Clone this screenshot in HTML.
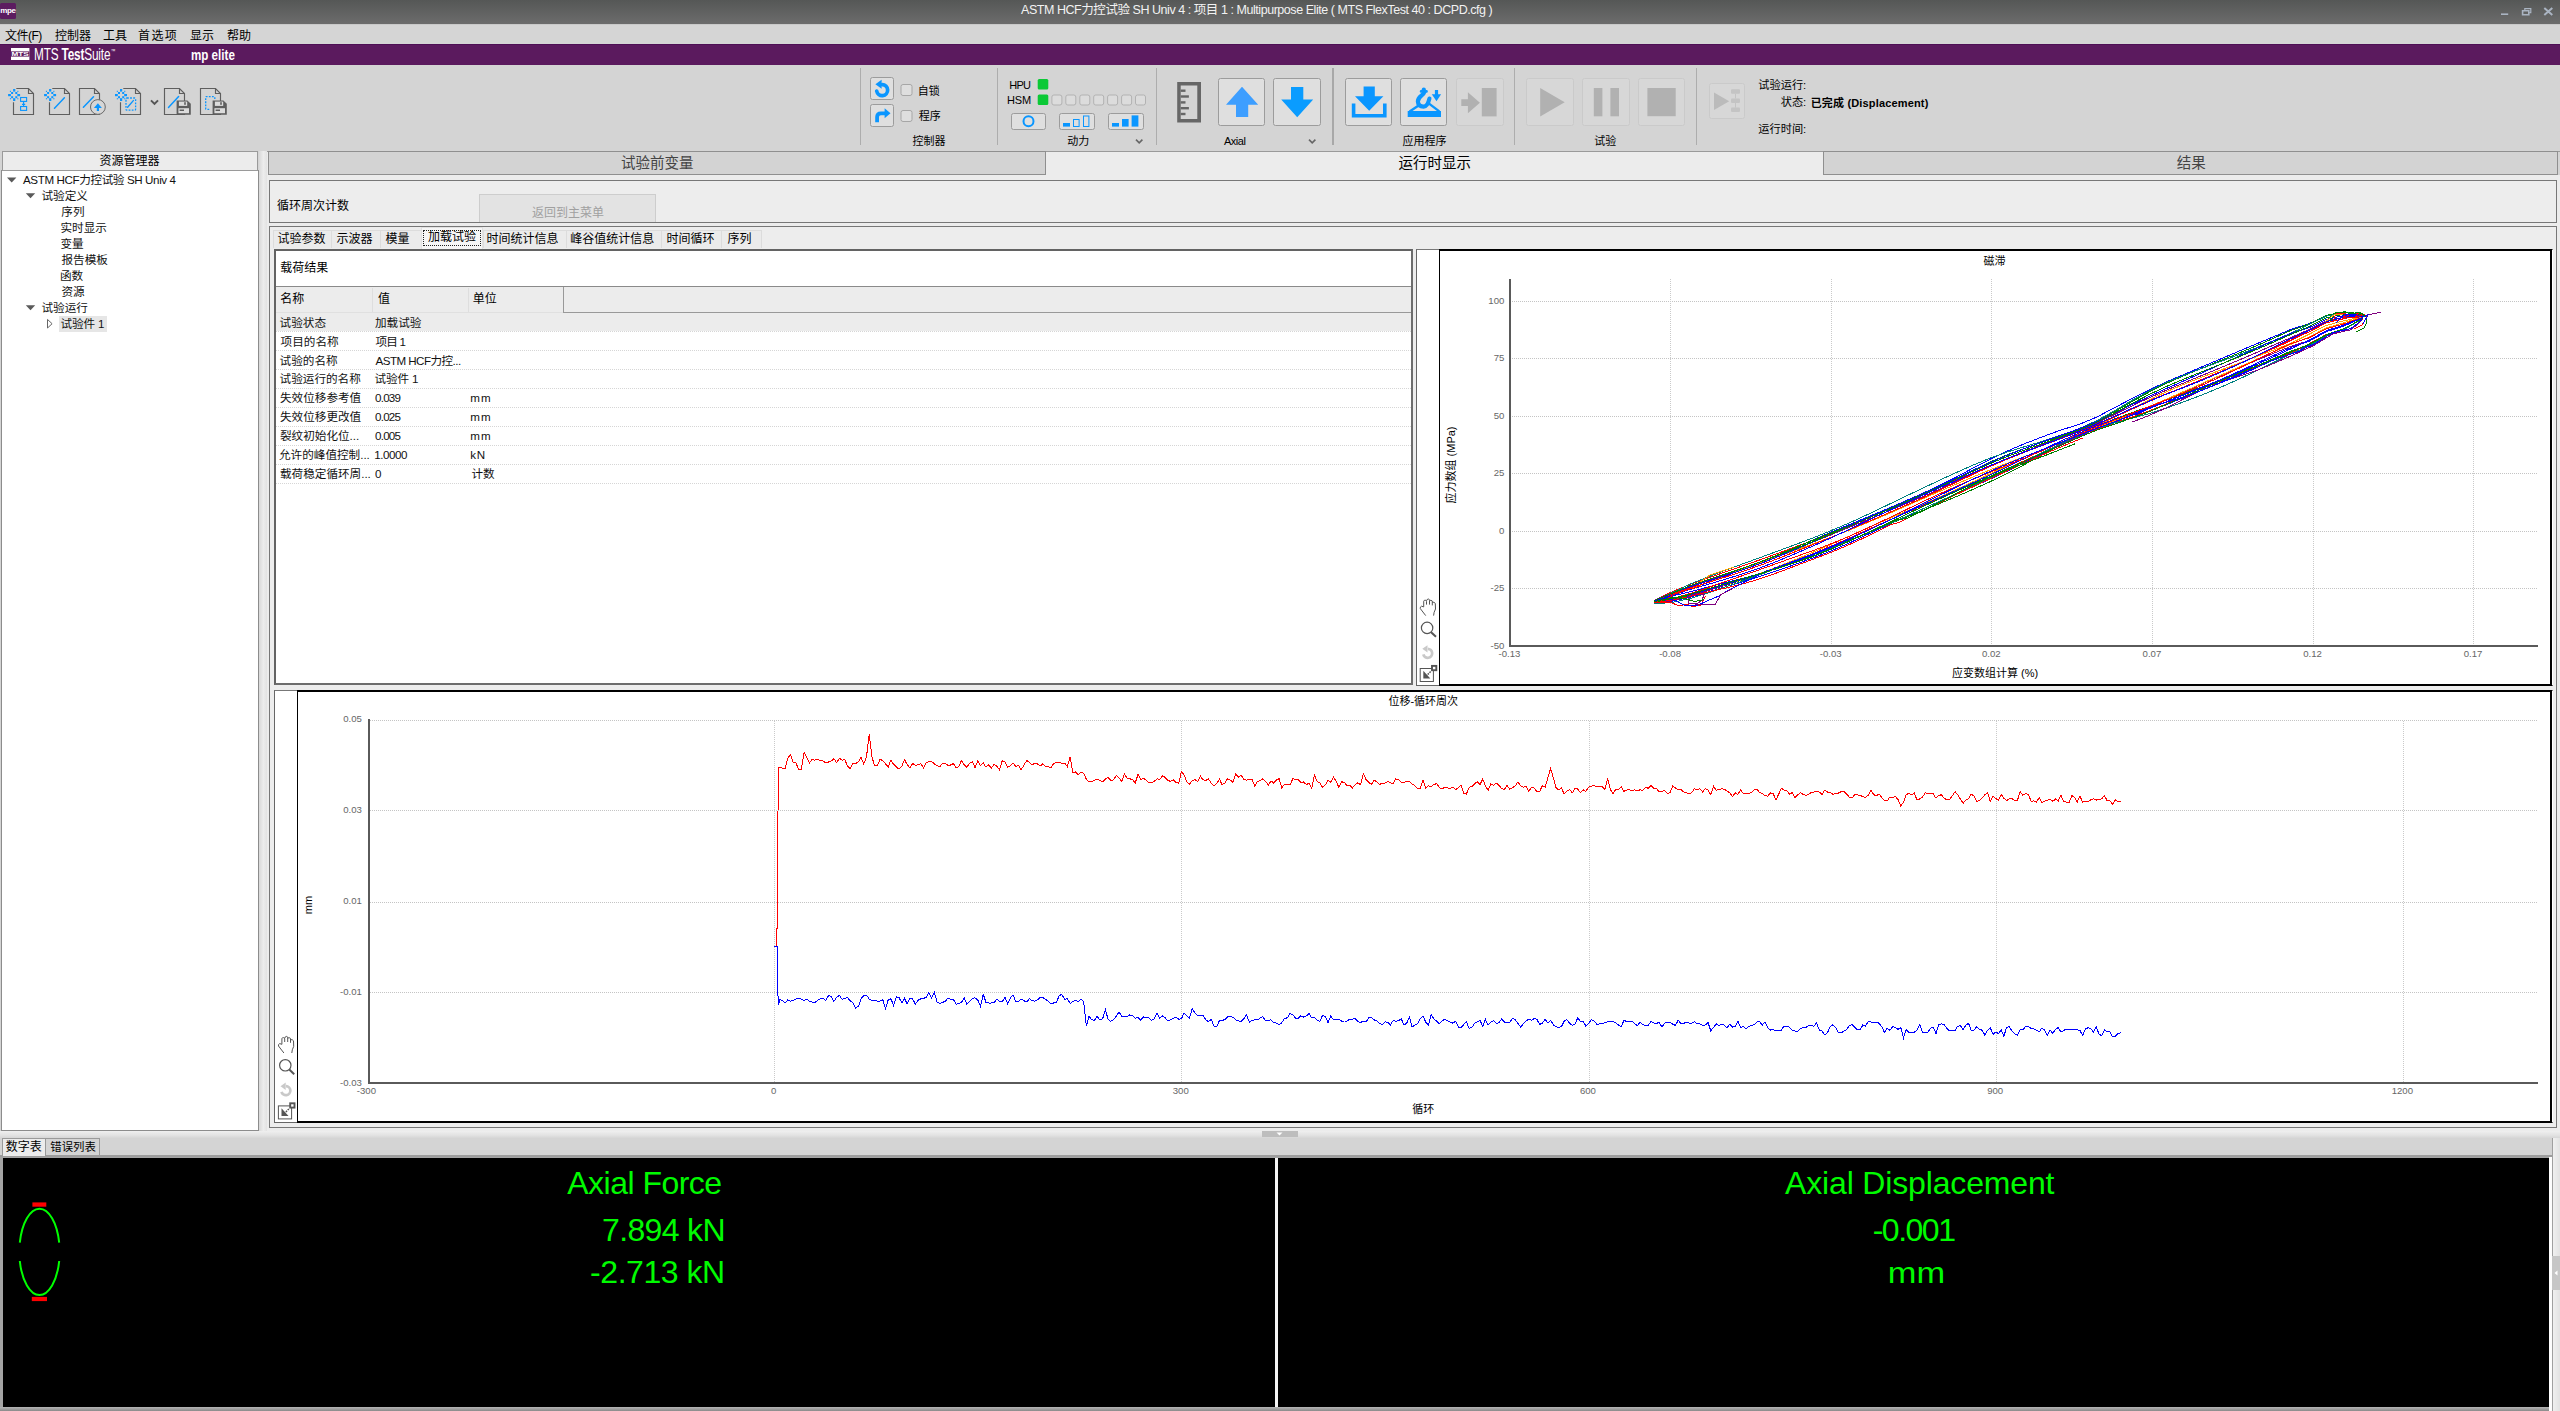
<!DOCTYPE html>
<html lang="zh"><head><meta charset="utf-8"><title>MTS TestSuite</title><style>
html,body{margin:0;padding:0}
body{width:2560px;height:1411px;position:relative;overflow:hidden;background:#d4d4d4;font-family:"Liberation Sans","Noto Sans CJK SC",sans-serif;font-size:12px;color:#000}
.a{position:absolute;box-sizing:border-box}
.t{position:absolute;white-space:nowrap}
svg{position:absolute;left:0;top:0;overflow:visible}
</style></head><body>
<div class="a" style="left:0px;top:0px;width:2560px;height:24px;background:linear-gradient(#555756,#6c6c6c);"></div>
<div class="a" style="left:0px;top:24px;width:2560px;height:1px;background:#c9c9c9;"></div>
<div class="a" style="left:0;top:3px;width:16px;height:16px;background:#5c1c60;border-radius:1.5px;color:#fff;font-weight:bold;font-size:8px;line-height:15px;letter-spacing:-0.3px;text-align:center;transform-origin:0 0">mpe</div>
<div class="t" style="top:1.40px;height:18px;line-height:18px;font-size:12.5px;color:#f2f2f2;letter-spacing:-0.450px;left:1021.00px;">ASTM HCF力控试验 SH Univ 4 : 项目 1 : Multipurpose Elite ( MTS FlexTest 40 : DCPD.cfg )</div>
<svg width="2560" height="24"><g stroke="#aab4c2" fill="none" stroke-width="1.6"><path d="M2501 14.2h7.2"/><path d="M2522.6 10.8h6.2v4h-6.2z"/><path d="M2524.8 10.5v-1.8h6v4h-1.6" stroke-width="1.2"/><path d="M2544.3 8l8 7M2552.3 8l-8 7" stroke-width="2"/></g></svg>
<div class="a" style="left:0px;top:25px;width:2560px;height:19px;background:#d5d5d5;"></div>
<div class="t" style="top:26.80px;height:18px;line-height:18px;font-size:12px;color:#000;letter-spacing:-0.500px;left:5.00px;">文件(F)</div>
<div class="t" style="top:26.80px;height:18px;line-height:18px;font-size:12px;color:#000;left:55.00px;">控制器</div>
<div class="t" style="top:26.80px;height:18px;line-height:18px;font-size:12px;color:#000;left:103.00px;">工具</div>
<div class="t" style="top:26.80px;height:18px;line-height:18px;font-size:12px;color:#000;left:138.00px;letter-spacing:1.4px;">首选项</div>
<div class="t" style="top:26.80px;height:18px;line-height:18px;font-size:12px;color:#000;left:190.00px;">显示</div>
<div class="t" style="top:26.80px;height:18px;line-height:18px;font-size:12px;color:#000;left:227.00px;">帮助</div>
<div class="a" style="left:0px;top:44px;width:2560px;height:21px;background:#5b1a5e;"></div>
<div class="a" style="left:0px;top:44px;width:2560px;height:1px;background:#4e0f55;"></div>
<svg width="40" height="66"><rect x="11" y="48" width="18.4" height="12" fill="#fff"/><rect x="11" y="51.4" width="18.4" height="5.2" fill="#5b1a5e"/><text x="11.6" y="56" font-size="5.4" font-weight="bold" fill="#fff" textLength="17.2" lengthAdjust="spacingAndGlyphs" font-family="Liberation Sans,sans-serif">MTS</text></svg>
<div class="t" style="left:34px;top:44.1px;height:21px;line-height:21px;font-size:15.8px;color:#fff;transform:scaleX(.745);transform-origin:0 50%;letter-spacing:-0.2px">MTS <b>Test</b>Suite<span style="font-size:6px;position:relative;top:-7px;left:0.5px">™</span></div>
<div class="t" style="left:191px;top:44.5px;height:21px;line-height:21px;font-size:14.5px;font-weight:bold;color:#fff;transform:scaleX(.80);transform-origin:0 50%">mp elite</div>
<div class="a" style="left:0px;top:65px;width:2560px;height:86px;background:#d4d4d4;"></div>
<div class="a" style="left:860px;top:68px;width:1px;height:77px;background:#adadad;"></div>
<div class="a" style="left:997px;top:68px;width:1px;height:77px;background:#adadad;"></div>
<div class="a" style="left:1156px;top:68px;width:1px;height:77px;background:#adadad;"></div>
<div class="a" style="left:1514px;top:68px;width:1px;height:77px;background:#adadad;"></div>
<div class="a" style="left:1696px;top:68px;width:1px;height:77px;background:#adadad;"></div>
<div class="a" style="left:1332px;top:68px;width:2px;height:77px;background:#a8a8a8;"></div>
<div class="a" style="left:1px;top:170px;width:258px;height:961px;background:#fff;border:1px solid #8c8c8c;"></div>
<div class="a" style="left:2px;top:151px;width:256px;height:20px;background:#ececec;border:1px solid #9a9a9a;"></div>
<div class="t" style="top:151.80px;height:18px;line-height:18px;font-size:12px;color:#000;left:99.60px;">资源管理器</div>
<div class="a" style="left:259px;top:151px;width:8px;height:980px;background:linear-gradient(90deg,#d8d8d8,#ededed 55%,#e2e2e2);"></div>
<div class="a" style="left:267px;top:151px;width:2293px;height:980px;background:#ececec;"></div>
<div class="a" style="left:267px;top:151px;width:2293px;height:1px;background:#9a9a9a;"></div>
<div class="a" style="left:268px;top:151px;width:778px;height:24px;background:#d3d3d3;border:1px solid #8f8f8f;"></div>
<div class="a" style="left:1823px;top:151px;width:735px;height:24px;background:#d3d3d3;border:1px solid #8f8f8f;"></div>
<div class="t" style="top:153.10px;height:21px;line-height:21px;font-size:14.5px;color:#444;left:621.00px;">试验前变量</div>
<div class="t" style="top:153.10px;height:21px;line-height:21px;font-size:14.5px;color:#000;left:1398.50px;">运行时显示</div>
<div class="t" style="top:153.10px;height:21px;line-height:21px;font-size:14.5px;color:#444;left:2176.70px;">结果</div>
<div class="a" style="left:2558px;top:152px;width:2px;height:23px;background:#d4d4d4;"></div>
<div class="a" style="left:269px;top:180px;width:2288px;height:43px;background:#ededed;border:1px solid #777;"></div>
<div class="t" style="top:196.60px;height:18px;line-height:18px;font-size:12px;color:#000;left:277.00px;">循环周次计数</div>
<div class="a" style="left:479px;top:194px;width:177px;height:28px;background:#e3e3e3;border:1px solid #cdcdcd;border-bottom:none;"></div>
<div class="t" style="top:203.60px;height:18px;line-height:18px;font-size:12px;color:#a0a0a0;left:532.00px;">返回到主菜单</div>
<div class="a" style="left:269px;top:226px;width:2288px;height:902px;background:#ededed;border:1px solid #777;"></div>
<div class="a" style="left:272.5px;top:230px;width:59.5px;height:18px;background:#ebebeb;border:1px solid #dcdcdc;border-bottom:none;"></div>
<div class="t" style="top:229.80px;height:18px;line-height:18px;font-size:12px;color:#000;left:277.50px;">试验参数</div>
<div class="a" style="left:331px;top:230px;width:49.5px;height:18px;background:#ebebeb;border:1px solid #dcdcdc;border-bottom:none;"></div>
<div class="t" style="top:229.80px;height:18px;line-height:18px;font-size:12px;color:#000;left:336.50px;">示波器</div>
<div class="a" style="left:379.5px;top:230px;width:42.0px;height:18px;background:#ebebeb;border:1px solid #dcdcdc;border-bottom:none;"></div>
<div class="t" style="top:229.80px;height:18px;line-height:18px;font-size:12px;color:#000;left:385.60px;">模量</div>
<div class="a" style="left:483px;top:230px;width:83.5px;height:18px;background:#ebebeb;border:1px solid #dcdcdc;border-bottom:none;"></div>
<div class="t" style="top:229.80px;height:18px;line-height:18px;font-size:12px;color:#000;left:486.50px;">时间统计信息</div>
<div class="a" style="left:565.5px;top:230px;width:96.5px;height:18px;background:#ebebeb;border:1px solid #dcdcdc;border-bottom:none;"></div>
<div class="t" style="top:229.80px;height:18px;line-height:18px;font-size:12px;color:#000;left:570.20px;">峰谷值统计信息</div>
<div class="a" style="left:661px;top:230px;width:61px;height:18px;background:#ebebeb;border:1px solid #dcdcdc;border-bottom:none;"></div>
<div class="t" style="top:229.80px;height:18px;line-height:18px;font-size:12px;color:#000;left:666.50px;">时间循环</div>
<div class="a" style="left:721px;top:230px;width:41px;height:18px;background:#ebebeb;border:1px solid #dcdcdc;border-bottom:none;"></div>
<div class="t" style="top:229.80px;height:18px;line-height:18px;font-size:12px;color:#000;left:727.50px;">序列</div>
<div class="a" style="left:421px;top:227px;width:62px;height:22px;background:#f6f6f6;border:1px solid #e2e2e2;border-bottom:none;"></div>
<div class="a" style="left:423px;top:230px;width:58px;height:16px;border:1px dotted #222;"></div>
<div class="t" style="top:228.00px;height:18px;line-height:18px;font-size:12px;color:#000;left:428.00px;">加载试验</div>
<div class="a" style="left:59px;top:316px;width:48px;height:16px;background:#e6e6e6;"></div>
<div class="t" style="top:170.60px;height:17px;line-height:17px;font-size:11.6px;color:#111;letter-spacing:-0.381px;left:23.00px;">ASTM HCF力控试验 SH Univ 4</div>
<div class="t" style="top:187.47px;height:17px;line-height:17px;font-size:11.6px;color:#111;left:41.50px;">试验定义</div>
<div class="t" style="top:203.44px;height:17px;line-height:17px;font-size:11.6px;color:#111;left:61.30px;">序列</div>
<div class="t" style="top:219.41px;height:17px;line-height:17px;font-size:11.6px;color:#111;left:60.50px;">实时显示</div>
<div class="t" style="top:235.38px;height:17px;line-height:17px;font-size:11.6px;color:#111;left:60.50px;">变量</div>
<div class="t" style="top:251.35px;height:17px;line-height:17px;font-size:11.6px;color:#111;left:61.50px;">报告模板</div>
<div class="t" style="top:267.32px;height:17px;line-height:17px;font-size:11.6px;color:#111;left:60.00px;">函数</div>
<div class="t" style="top:283.29px;height:17px;line-height:17px;font-size:11.6px;color:#111;left:61.50px;">资源</div>
<div class="t" style="top:299.26px;height:17px;line-height:17px;font-size:11.6px;color:#111;left:41.50px;">试验运行</div>
<div class="t" style="top:315.23px;height:17px;line-height:17px;font-size:11.6px;color:#111;letter-spacing:-0.125px;left:60.50px;">试验件 1</div>
<svg width="260" height="340"><path d="M7 177.4h9.4l-4.7 5z" fill="#5a5a5a"/><path d="M25.8 193.37h9.4l-4.7 5z" fill="#5a5a5a"/><path d="M25.8 305.15999999999997h9.4l-4.7 5z" fill="#5a5a5a"/><path d="M47.5 319.43v8.6l4.6-4.3z" fill="none" stroke="#666" stroke-width="1"/></svg>
<div class="a" style="left:274px;top:249px;width:1139px;height:436px;background:#fff;border:2px solid #636363;border-right-color:#6d6d6d;border-bottom-color:#6d6d6d;"></div>
<div class="t" style="top:258.60px;height:18px;line-height:18px;font-size:12px;color:#000;left:280.30px;">载荷结果</div>
<div class="a" style="left:276px;top:286px;width:1135px;height:27px;background:#ececec;border-top:1px solid #8a8a8a;"></div>
<div class="a" style="left:563px;top:287px;width:848px;height:26px;background:#ececec;border-left:1px solid #999;border-bottom:1px solid #999;"></div>
<div class="a" style="left:276px;top:312px;width:287px;height:1px;background:#e0e0e0;"></div>
<div class="a" style="left:372px;top:288px;width:1px;height:24px;background:#dedede;"></div>
<div class="a" style="left:468px;top:288px;width:1px;height:24px;background:#dedede;"></div>
<div class="t" style="top:289.80px;height:18px;line-height:18px;font-size:12px;color:#000;left:280.30px;">名称</div>
<div class="t" style="top:289.80px;height:18px;line-height:18px;font-size:12px;color:#000;left:378.00px;">值</div>
<div class="t" style="top:289.80px;height:18px;line-height:18px;font-size:12px;color:#000;left:472.80px;">单位</div>
<div class="a" style="left:276px;top:313px;width:1135px;height:18px;background:#ececec;"></div>
<div class="t" style="top:314.00px;height:17px;line-height:17px;font-size:11.6px;color:#111;left:279.60px;">试验状态</div>
<div class="t" style="top:314.00px;height:17px;line-height:17px;font-size:11.6px;color:#111;left:375.00px;">加载试验</div>
<div class="a" style="left:276px;top:331px;width:1135px;height:1px;border-top:1px dotted #d6d6d6;"></div>
<div class="t" style="top:332.83px;height:17px;line-height:17px;font-size:11.6px;color:#111;left:280.60px;">项目的名称</div>
<div class="t" style="top:332.83px;height:17px;line-height:17px;font-size:11.6px;color:#111;letter-spacing:-0.833px;left:375.50px;">项目 1</div>
<div class="a" style="left:276px;top:350px;width:1135px;height:1px;border-top:1px dotted #d6d6d6;"></div>
<div class="t" style="top:351.66px;height:17px;line-height:17px;font-size:11.6px;color:#111;left:279.60px;">试验的名称</div>
<div class="t" style="top:351.66px;height:17px;line-height:17px;font-size:11.6px;color:#111;letter-spacing:-0.542px;left:375.50px;">ASTM HCF力控...</div>
<div class="a" style="left:276px;top:369px;width:1135px;height:1px;border-top:1px dotted #d6d6d6;"></div>
<div class="t" style="top:370.49px;height:17px;line-height:17px;font-size:11.6px;color:#111;left:279.60px;">试验运行的名称</div>
<div class="t" style="top:370.49px;height:17px;line-height:17px;font-size:11.6px;color:#111;letter-spacing:-0.125px;left:374.50px;">试验件 1</div>
<div class="a" style="left:276px;top:388px;width:1135px;height:1px;border-top:1px dotted #d6d6d6;"></div>
<div class="t" style="top:389.32px;height:17px;line-height:17px;font-size:11.6px;color:#111;left:280.00px;">失效位移参考值</div>
<div class="t" style="top:389.32px;height:17px;line-height:17px;font-size:11.6px;color:#111;letter-spacing:-0.750px;left:375.00px;">0.039</div>
<div class="t" style="top:389.32px;height:17px;line-height:17px;font-size:11.6px;color:#111;letter-spacing:1.000px;left:470.30px;">mm</div>
<div class="a" style="left:276px;top:407px;width:1135px;height:1px;border-top:1px dotted #d6d6d6;"></div>
<div class="t" style="top:408.15px;height:17px;line-height:17px;font-size:11.6px;color:#111;left:280.00px;">失效位移更改值</div>
<div class="t" style="top:408.15px;height:17px;line-height:17px;font-size:11.6px;color:#111;letter-spacing:-0.750px;left:375.00px;">0.025</div>
<div class="t" style="top:408.15px;height:17px;line-height:17px;font-size:11.6px;color:#111;letter-spacing:1.000px;left:470.30px;">mm</div>
<div class="a" style="left:276px;top:426px;width:1135px;height:1px;border-top:1px dotted #d6d6d6;"></div>
<div class="t" style="top:426.98px;height:17px;line-height:17px;font-size:11.6px;color:#111;left:280.00px;">裂纹初始化位...</div>
<div class="t" style="top:426.98px;height:17px;line-height:17px;font-size:11.6px;color:#111;letter-spacing:-0.750px;left:375.00px;">0.005</div>
<div class="t" style="top:426.98px;height:17px;line-height:17px;font-size:11.6px;color:#111;letter-spacing:1.000px;left:470.30px;">mm</div>
<div class="a" style="left:276px;top:445px;width:1135px;height:1px;border-top:1px dotted #d6d6d6;"></div>
<div class="t" style="top:445.81px;height:17px;line-height:17px;font-size:11.6px;color:#111;left:279.00px;">允许的峰值控制...</div>
<div class="t" style="top:445.81px;height:17px;line-height:17px;font-size:11.6px;color:#111;letter-spacing:-0.460px;left:374.30px;">1.0000</div>
<div class="t" style="top:445.81px;height:17px;line-height:17px;font-size:11.6px;color:#111;letter-spacing:0.700px;left:470.30px;">kN</div>
<div class="a" style="left:276px;top:464px;width:1135px;height:1px;border-top:1px dotted #d6d6d6;"></div>
<div class="t" style="top:464.64px;height:17px;line-height:17px;font-size:11.6px;color:#111;left:280.00px;">载荷稳定循环周...</div>
<div class="t" style="top:464.64px;height:17px;line-height:17px;font-size:11.6px;color:#111;letter-spacing:0.000px;left:375.00px;">0</div>
<div class="t" style="top:464.64px;height:17px;line-height:17px;font-size:11.6px;color:#111;left:471.50px;">计数</div>
<div class="a" style="left:276px;top:483px;width:1135px;height:1px;border-top:1px dotted #d6d6d6;"></div>
<svg width="2560" height="151"><path d="M16.3 88.5h12.2l5 5v21h-20v-12.3 M28.5 88.5v5h5" fill="none" stroke="#5e5e5e" stroke-width="1.15"/><g fill="#0a96ff"><rect x="13.1" y="89" width="2.2" height="2.6"/><rect x="13.1" y="98.2" width="2.2" height="2.8"/><rect x="8.1" y="94" width="2.8" height="2.2"/><rect x="17.3" y="94" width="2.8" height="2.2"/><rect x="11.1" y="92" width="2" height="2"/><rect x="15.299999999999999" y="92" width="2" height="2"/><rect x="11.1" y="96.2" width="2" height="2"/><rect x="15.299999999999999" y="96.2" width="2" height="2"/><rect x="9.899999999999999" y="90.8" width="1.1" height="1.1"/><rect x="17.3" y="90.8" width="1.1" height="1.1"/><rect x="9.899999999999999" y="98.2" width="1.1" height="1.1"/><rect x="17.3" y="98.2" width="1.1" height="1.1"/></g><g fill="none" stroke="#0a96ff" stroke-width="1.1"><rect x="20.6" y="97.5" width="6" height="3.9"/><rect x="20.6" y="106.5" width="6" height="3.9"/><path d="M23.6 101.4v5.1M22 104.4h3.2"/></g><path d="M52.3 88.5h12.2l5 5v21h-20v-12.3 M64.5 88.5v5h5" fill="none" stroke="#5e5e5e" stroke-width="1.15"/><g fill="#0a96ff"><rect x="49.1" y="89" width="2.2" height="2.6"/><rect x="49.1" y="98.2" width="2.2" height="2.8"/><rect x="44.1" y="94" width="2.8" height="2.2"/><rect x="53.300000000000004" y="94" width="2.8" height="2.2"/><rect x="47.1" y="92" width="2" height="2"/><rect x="51.300000000000004" y="92" width="2" height="2"/><rect x="47.1" y="96.2" width="2" height="2"/><rect x="51.300000000000004" y="96.2" width="2" height="2"/><rect x="45.9" y="90.8" width="1.1" height="1.1"/><rect x="53.300000000000004" y="90.8" width="1.1" height="1.1"/><rect x="45.9" y="98.2" width="1.1" height="1.1"/><rect x="53.300000000000004" y="98.2" width="1.1" height="1.1"/></g><path d="M54.5 108.2L64.4 97.8" stroke="#0a96ff" stroke-width="1.5" stroke-linecap="round"/><path d="M79.5 88.5h15l5 5v21h-20z M94.5 88.5v5h5" fill="none" stroke="#5e5e5e" stroke-width="1.15"/><path d="M83.4 107.2L93.5 96.7" stroke="#0a96ff" stroke-width="1.5" stroke-linecap="round"/><circle cx="97.9" cy="107" r="7.4" fill="#d6d6d6" stroke="#6a6a6a" stroke-width="1"/><path d="M97.9 103.2l4 4.7h-2.9v3h-2.2v-3h-2.9z" fill="#0a96ff"/><path d="M123.3 88.5h12.2l5 5v21h-20v-12.3 M135.5 88.5v5h5" fill="none" stroke="#5e5e5e" stroke-width="1.15"/><g fill="#0a96ff"><rect x="120" y="89" width="2.2" height="2.6"/><rect x="120" y="98.2" width="2.2" height="2.8"/><rect x="115" y="94" width="2.8" height="2.2"/><rect x="124.2" y="94" width="2.8" height="2.2"/><rect x="118" y="92" width="2" height="2"/><rect x="122.2" y="92" width="2" height="2"/><rect x="118" y="96.2" width="2" height="2"/><rect x="122.2" y="96.2" width="2" height="2"/><rect x="116.8" y="90.8" width="1.1" height="1.1"/><rect x="124.2" y="90.8" width="1.1" height="1.1"/><rect x="116.8" y="98.2" width="1.1" height="1.1"/><rect x="124.2" y="98.2" width="1.1" height="1.1"/></g><rect x="126" y="98" width="9.6" height="12.2" rx="1" fill="none" stroke="#0a96ff" stroke-width="1.3" stroke-dasharray="1.8 1.3"/><path d="M127.6 107.3L133.3 100.6" stroke="#0a96ff" stroke-width="1.4" stroke-linecap="round"/><path d="M151 100.4l3.5 3.5 3.5-3.5" fill="none" stroke="#555" stroke-width="2"/><path d="M164.5 88.5h15l5 5v21h-20z M179.5 88.5v5h5" fill="none" stroke="#5e5e5e" stroke-width="1.15"/><path d="M168.5 107.4L178.6 96.6" stroke="#0a96ff" stroke-width="1.5" stroke-linecap="round"/><path d="M176.6 100.4h10.8l3.4 3.4v11h-14.2z" fill="#5e5e5e"/><rect x="178.9" y="101.6" width="8.3" height="4.3" fill="#dcdcdc"/><rect x="184.2" y="102.2" width="1.6" height="2.6" fill="#5e5e5e"/><rect x="178.4" y="108.2" width="10.6" height="5" fill="#dcdcdc"/><rect x="179.6" y="109.5" width="4.4" height="1.5" fill="#5e5e5e"/><path d="M200.5 88.5h15l5 5v21h-20z M215.5 88.5v5h5" fill="none" stroke="#5e5e5e" stroke-width="1.15"/><path d="M214.8 99v-1.8q0-.6-.6-.6h-7.8q-.7 0-.7.7v11.3q0 .8.8.8h4" fill="none" stroke="#0a96ff" stroke-width="1.3" stroke-dasharray="1.8 1.3"/><path d="M212.6 100.4h10.8l3.4 3.4v11h-14.2z" fill="#5e5e5e"/><rect x="214.9" y="101.6" width="8.3" height="4.3" fill="#dcdcdc"/><rect x="220.2" y="102.2" width="1.6" height="2.6" fill="#5e5e5e"/><rect x="214.4" y="108.2" width="10.6" height="5" fill="#dcdcdc"/><rect x="215.6" y="109.5" width="4.4" height="1.5" fill="#5e5e5e"/><rect x="870.5" y="77.5" width="23" height="22" rx="2" fill="#dfdfdf" stroke="#9c9c9c"/><rect x="870.5" y="104.5" width="23" height="22" rx="2" fill="#dfdfdf" stroke="#9c9c9c"/><path d="M876.7 91a5.5 5.5 0 1 0 5.5-6.4" fill="none" stroke="#0a96ff" stroke-width="3.7" stroke-linecap="round"/><path d="M875.4 84.3l6.2-4.6v9z" fill="#0a96ff"/><path d="M877.1 122.3v-5.2q0-3.8 3.8-3.8h4.2" fill="none" stroke="#0a96ff" stroke-width="3.8"/><path d="M890.5 113.3l-5.9-5v10z" fill="#0a96ff"/><rect x="901" y="84.5" width="11" height="11" rx="2" fill="#dedede" stroke="#a6a6a6"/><rect x="901" y="110.5" width="11" height="11" rx="2" fill="#dedede" stroke="#a6a6a6"/><rect x="1037.7" y="79" width="10.6" height="10.4" rx="1.5" fill="#0bc936"/><rect x="1037.7" y="94.6" width="10.6" height="10.4" rx="1.5" fill="#0bc936"/><rect x="1051.9" y="95" width="10" height="10" rx="2" fill="#dcdcdc" stroke="#b2b2b2"/><rect x="1065.8" y="95" width="10" height="10" rx="2" fill="#dcdcdc" stroke="#b2b2b2"/><rect x="1079.8" y="95" width="10" height="10" rx="2" fill="#dcdcdc" stroke="#b2b2b2"/><rect x="1093.7" y="95" width="10" height="10" rx="2" fill="#dcdcdc" stroke="#b2b2b2"/><rect x="1107.6" y="95" width="10" height="10" rx="2" fill="#dcdcdc" stroke="#b2b2b2"/><rect x="1121.6" y="95" width="10" height="10" rx="2" fill="#dcdcdc" stroke="#b2b2b2"/><rect x="1135.5" y="95" width="10" height="10" rx="2" fill="#dcdcdc" stroke="#b2b2b2"/><rect x="1011.5" y="113.5" width="34" height="16" rx="2" fill="#dfdfdf" stroke="#9c9c9c"/><rect x="1059.5" y="113.5" width="35" height="16" rx="2" fill="#dfdfdf" stroke="#9c9c9c"/><rect x="1108.5" y="113.5" width="35" height="16" rx="2" fill="#dfdfdf" stroke="#9c9c9c"/><circle cx="1028.5" cy="121.3" r="5" fill="none" stroke="#0a96ff" stroke-width="2"/><rect x="1063" y="123" width="7" height="3.6" fill="#0a96ff"/><g fill="none" stroke="#0a96ff" stroke-width="1"><rect x="1073.5" y="119.5" width="5.6" height="7"/><rect x="1083.5" y="116" width="5.4" height="10.5"/></g><g fill="#0a96ff"><rect x="1112" y="123" width="7" height="3.6"/><rect x="1122" y="119" width="6.6" height="7.6"/><rect x="1131.6" y="115.4" width="6.8" height="11.2"/></g><path d="M1136 139.6l3.2 3.2 3.2-3.2" fill="none" stroke="#666" stroke-width="1.6"/><path d="M1177.2 82h23.8v40.5h-23.8z M1180.7 85.6v33.3h16.6v-33.3z" fill="#666" fill-rule="evenodd"/><rect x="1180.7" y="89.5" width="4.8" height="2.4" fill="#666"/><rect x="1180.7" y="95.3" width="8.2" height="2.4" fill="#666"/><rect x="1180.7" y="101.2" width="4.8" height="2.4" fill="#666"/><rect x="1180.7" y="107" width="8.2" height="2.4" fill="#666"/><rect x="1180.7" y="112.8" width="4.8" height="2.4" fill="#666"/><rect x="1218.5" y="78.5" width="46" height="47" rx="2" fill="#dfdfdf" stroke="#9c9c9c"/><rect x="1273.5" y="78.5" width="47" height="47" rx="2" fill="#dfdfdf" stroke="#9c9c9c"/><path d="M1242 86.7l16.2 18h-10v12.2h-12.2v-12.2h-10z" fill="#3d9eff"/><path d="M1297.2 117.2l-16-17.8h9.8v-12.5h12.3v12.5h9.9z" fill="#0a9cff"/><path d="M1309 139.6l3.2 3.2 3.2-3.2" fill="none" stroke="#666" stroke-width="1.6"/><rect x="1345.5" y="78.5" width="46" height="47" rx="2" fill="#dfdfdf" stroke="#9c9c9c"/><rect x="1400.5" y="78.5" width="46" height="47" rx="2" fill="#dfdfdf" stroke="#9c9c9c"/><rect x="1456.5" y="78.5" width="47" height="47" rx="2" fill="#d7d7d7" stroke="#cacaca"/><path d="M1369.2 110.8l-14.2-14.6h8.6v-9.6h11.2v9.6h8.6z" fill="#0a96ff"/><path d="M1353.6 103.5v12.2h31.2v-12.2" fill="none" stroke="#0a96ff" stroke-width="3.6"/><g fill="none" stroke="#0a96ff"><path d="M1407.7 113.9h33.3" stroke-width="6"/><path d="M1409.6 111.4l9.4-6.2M1439.3 111.4l-10.6-8" stroke-width="2.4"/><path d="M1424.2 92.2C1423.4 95.6 1417.6 96.4 1417.9 101.6C1418.2 106 1421.2 106.6 1423.6 106.6C1427.2 106.4 1428.4 103 1429.4 98.6" stroke-width="4.2" stroke-linecap="round"/></g><circle cx="1423.8" cy="89.6" r="2.1" fill="#0a96ff"/><rect x="1419.8" y="89.9" width="8" height="2.8" rx="1.3" fill="#0a96ff"/><path d="M1422.4 101.4l1.5-1.3 1.2 1 .8-1.6v3z" fill="#dedede"/><path d="M1434.9 89.9h3.2v4.4h3l-4.6 7-4.7-7h3.1z" fill="#0a96ff"/><path d="M1461.3 99.3h6.6v-7l12 10.4-12 10.6v-7.2h-6.6z" fill="#b1b1b1"/><rect x="1481.8" y="88" width="14.8" height="28.4" fill="#b1b1b1"/><rect x="1526.5" y="78.5" width="47" height="47" rx="2" fill="#d7d7d7" stroke="#cacaca"/><rect x="1582.5" y="78.5" width="47" height="47" rx="2" fill="#d7d7d7" stroke="#cacaca"/><rect x="1638.5" y="78.5" width="46" height="47" rx="2" fill="#d7d7d7" stroke="#cacaca"/><path d="M1540.2 88l24.5 14.2-24.5 14.4z" fill="#b1b1b1"/><rect x="1593.8" y="88" width="8.6" height="28.3" fill="#b1b1b1"/><rect x="1610.4" y="88" width="8.6" height="28.3" fill="#b1b1b1"/><rect x="1647.4" y="88" width="28.3" height="28.2" fill="#b1b1b1"/><rect x="1709.5" y="83.5" width="35" height="35" rx="2" fill="#d7d7d7" stroke="#cacaca"/><path d="M1714 92.6l15.2 8.7-15.2 8.8z" fill="#bbb"/><g fill="#c4c4c4"><rect x="1731" y="89.2" width="9" height="4.6" rx="1"/><rect x="1731" y="98.4" width="9" height="4.6" rx="1"/><rect x="1731" y="107.5" width="9" height="4.6" rx="1"/><rect x="1735" y="93.8" width="1" height="4.6"/><rect x="1735" y="103" width="1" height="4.6"/></g></svg>
<div class="t" style="top:83.00px;height:16px;line-height:16px;font-size:11px;color:#000;left:917.80px;">自锁</div>
<div class="t" style="top:108.10px;height:16px;line-height:16px;font-size:11px;color:#000;left:918.80px;">程序</div>
<div class="t" style="top:133.00px;height:16px;line-height:16px;font-size:11px;color:#000;left:912.40px;">控制器</div>
<div class="t" style="top:76.90px;height:16px;line-height:16px;font-size:11px;color:#000;letter-spacing:-0.750px;left:1009.30px;">HPU</div>
<div class="t" style="top:92.10px;height:16px;line-height:16px;font-size:11px;color:#000;letter-spacing:-0.100px;left:1007.00px;">HSM</div>
<div class="t" style="top:133.00px;height:16px;line-height:16px;font-size:11px;color:#000;left:1067.20px;">动力</div>
<div class="t" style="top:132.60px;height:16px;line-height:16px;font-size:11px;color:#000;letter-spacing:-0.500px;left:1224.00px;">Axial</div>
<div class="t" style="top:133.00px;height:16px;line-height:16px;font-size:11px;color:#000;left:1402.50px;">应用程序</div>
<div class="t" style="top:133.00px;height:16px;line-height:16px;font-size:11px;color:#000;left:1594.30px;">试验</div>
<div class="t" style="top:76.60px;height:17px;line-height:17px;font-size:11.2px;color:#000;right:753.80px;">试验运行:</div>
<div class="t" style="top:94.10px;height:17px;line-height:17px;font-size:11.2px;color:#000;right:753.80px;">状态:</div>
<div class="t" style="top:120.60px;height:17px;line-height:17px;font-size:11.2px;color:#000;right:753.80px;">运行时间:</div>
<div class="t" style="top:94.60px;height:16px;line-height:16px;font-size:11px;color:#000;font-weight:bold;letter-spacing:0.159px;left:1810.70px;">已完成 (Displacement)</div>
<div class="a" style="left:1416px;top:249px;width:1137px;height:437px;background:#fff;border-left:1.5px solid #666;border-top:1px solid #777;border-bottom:1px solid #666;"></div>
<div class="a" style="left:1439px;top:249px;width:1113px;height:437px;background:#fff;border:2px solid #000;border-left-width:1.5px;"></div>
<svg width="2560" height="700" shape-rendering="crispEdges"><path d="M1512 301.5H2537" stroke="#c4c4c4" stroke-dasharray="1 1"/><path d="M1512 358.5H2537" stroke="#c4c4c4" stroke-dasharray="1 1"/><path d="M1512 416.5H2537" stroke="#c4c4c4" stroke-dasharray="1 1"/><path d="M1512 473.5H2537" stroke="#c4c4c4" stroke-dasharray="1 1"/><path d="M1512 531.5H2537" stroke="#c4c4c4" stroke-dasharray="1 1"/><path d="M1512 588.5H2537" stroke="#c4c4c4" stroke-dasharray="1 1"/><path d="M1670.5 279V645" stroke="#cacaca" stroke-dasharray="1 1"/><path d="M1831.5 279V645" stroke="#cacaca" stroke-dasharray="1 1"/><path d="M1991.5 279V645" stroke="#cacaca" stroke-dasharray="1 1"/><path d="M2152.5 279V645" stroke="#cacaca" stroke-dasharray="1 1"/><path d="M2313.5 279V645" stroke="#cacaca" stroke-dasharray="1 1"/><path d="M2473.5 279V645" stroke="#cacaca" stroke-dasharray="1 1"/><rect x="1509" y="279" width="2" height="368" fill="#5a5a5a"/><rect x="1509" y="645" width="1029" height="2" fill="#5a5a5a"/></svg><svg width="2560" height="700" fill="none" stroke-width="1" shape-rendering="crispEdges"><path d="M1654.5 601.7 1672.2 596.2 1689.9 589.1 1707.6 582.7 1725.2 576.1 1742.9 569.3 1760.6 562.2 1778.3 554.7 1796.0 547.1 1813.7 539.6 1831.4 532.1 1849.1 524.7 1866.8 517.4 1884.4 510.0 1902.1 502.5 1919.8 494.7 1937.5 486.4 1955.2 477.5 1972.9 468.2 1990.6 459.0 2008.2 450.6 2025.9 443.2 2043.6 436.4 2061.3 429.9 2079.0 424.5 2096.7 417.1 2114.4 407.8 2132.1 398.5 2149.8 389.6 2167.4 381.4 2185.1 374.0 2202.8 366.5 2220.5 359.0 2238.2 351.5 2255.9 344.1 2273.6 336.7 2291.2 329.3 2308.9 323.8 2326.6 315.4 2344.3 312.0 2362.0 314.2 2362.0 318.8 2344.3 328.9 2326.6 335.5 2308.9 345.5 2291.2 352.0 2273.6 359.8 2255.9 367.4 2238.2 374.9 2220.5 382.3 2202.8 389.7 2185.1 397.0 2167.4 404.3 2149.8 411.1 2132.1 417.0 2114.4 422.7 2096.7 428.9 2079.0 436.4 2061.3 444.9 2043.6 453.5 2025.9 462.1 2008.2 470.7 1990.6 478.9 1972.9 486.7 1955.2 494.5 1937.5 502.2 1919.8 510.2 1902.1 518.4 1884.4 526.6 1866.8 534.8 1849.1 543.1 1831.4 550.8 1813.7 557.7 1796.0 564.1 1778.3 570.3 1760.6 576.2 1742.9 581.7 1725.2 586.9 1707.6 592.1 1689.9 597.3 1672.2 601.1 1654.5 603.5" stroke="#0000ff"/><path d="M1654.5 600.1 1672.2 591.8 1689.9 584.5 1707.6 578.2 1725.2 572.0 1742.9 565.8 1760.6 559.6 1778.3 553.2 1796.0 546.6 1813.7 540.0 1831.4 533.1 1849.1 525.8 1866.8 518.2 1884.4 510.6 1902.1 503.0 1919.8 495.5 1937.5 488.0 1955.2 480.4 1972.9 472.8 1990.6 465.3 2008.2 458.3 2025.9 451.6 2043.6 445.0 2061.3 438.4 2079.0 431.5 2096.7 424.3 2114.4 416.5 2132.1 408.3 2149.8 400.5 2167.4 393.4 2185.1 386.6 2202.8 379.5 2220.5 372.1 2238.2 364.3 2255.9 356.3 2273.6 348.4 2291.2 340.6 2308.9 329.8 2326.6 321.1 2344.3 317.3 2362.0 316.2 2362.0 319.3 2344.3 328.6 2326.6 334.4 2308.9 343.9 2291.2 352.7 2273.6 359.7 2255.9 366.7 2238.2 373.8 2220.5 381.1 2202.8 388.5 2185.1 396.0 2167.4 403.5 2149.8 410.6 2132.1 417.0 2114.4 423.0 2096.7 429.1 2079.0 436.1 2061.3 444.0 2043.6 451.9 2025.9 460.0 2008.2 468.2 1990.6 476.2 1972.9 484.0 1955.2 491.7 1937.5 499.3 1919.8 506.9 1902.1 514.5 1884.4 522.3 1866.8 530.1 1849.1 538.2 1831.4 546.0 1813.7 553.4 1796.0 560.4 1778.3 567.3 1760.6 573.7 1742.9 579.5 1725.2 584.8 1707.6 589.8 1689.9 594.6 1672.2 598.6 1654.5 602.5" stroke="#ff0000"/><path d="M1654.5 600.4 1672.2 593.1 1689.9 586.3 1707.6 580.6 1725.2 574.7 1742.9 568.5 1760.6 561.8 1778.3 554.6 1796.0 547.2 1813.7 539.9 1831.4 532.8 1849.1 525.7 1866.8 518.6 1884.4 511.4 1902.1 503.9 1919.8 496.1 1937.5 487.8 1955.2 479.1 1972.9 470.3 1990.6 461.8 2008.2 454.4 2025.9 447.9 2043.6 441.9 2061.3 435.7 2079.0 429.3 2096.7 421.5 2114.4 411.9 2132.1 401.5 2149.8 391.7 2167.4 382.9 2185.1 375.2 2202.8 367.8 2220.5 360.6 2238.2 353.4 2255.9 346.0 2273.6 338.2 2291.2 330.2 2308.9 324.2 2326.6 315.4 2344.3 311.8 2362.0 313.9 2362.0 318.9 2344.3 328.7 2326.6 334.9 2308.9 344.8 2291.2 351.0 2273.6 358.7 2255.9 366.2 2238.2 373.3 2220.5 380.1 2202.8 386.6 2185.1 393.1 2167.4 399.8 2149.8 406.3 2132.1 412.6 2114.4 419.0 2096.7 426.7 2079.0 435.2 2061.3 444.6 2043.6 454.3 2025.9 463.8 2008.2 473.0 1990.6 481.5 1972.9 489.4 1955.2 497.1 1937.5 504.4 1919.8 511.7 1902.1 518.9 1884.4 526.0 1866.8 533.1 1849.1 540.3 1831.4 547.3 1813.7 553.9 1796.0 560.4 1778.3 567.1 1760.6 573.7 1742.9 579.8 1725.2 585.4 1707.6 590.7 1689.9 595.7 1672.2 599.2 1654.5 602.6" stroke="#008000"/><path d="M1654.5 600.1 1672.2 592.5 1689.9 586.2 1707.6 580.8 1725.2 575.2 1742.9 569.3 1760.6 562.9 1778.3 556.0 1796.0 548.9 1813.7 541.8 1831.4 534.6 1849.1 527.4 1866.8 520.1 1884.4 512.7 1902.1 505.4 1919.8 497.9 1937.5 490.1 1955.2 482.0 1972.9 473.8 1990.6 465.6 2008.2 458.0 2025.9 451.0 2043.6 444.2 2061.3 437.4 2079.0 430.6 2096.7 423.0 2114.4 414.6 2132.1 405.8 2149.8 397.5 2167.4 389.7 2185.1 382.4 2202.8 375.1 2220.5 367.8 2238.2 360.4 2255.9 352.8 2273.6 345.1 2291.2 337.5 2308.9 329.6 2326.6 320.9 2344.3 317.0 2362.0 315.9 2362.0 318.1 2344.3 325.8 2326.6 331.3 2308.9 340.7 2291.2 346.2 2273.6 353.3 2255.9 360.6 2238.2 368.0 2220.5 375.7 2202.8 383.5 2185.1 391.5 2167.4 399.6 2149.8 407.4 2132.1 414.6 2114.4 421.6 2096.7 428.6 2079.0 436.2 2061.3 444.6 2043.6 452.8 2025.9 461.0 2008.2 469.0 1990.6 476.8 1972.9 484.2 1955.2 491.5 1937.5 498.6 1919.8 505.7 1902.1 512.9 1884.4 520.4 1866.8 528.2 1849.1 536.3 1831.4 544.3 1813.7 552.0 1796.0 559.3 1778.3 566.5 1760.6 573.3 1742.9 579.4 1725.2 585.2 1707.6 590.7 1689.9 596.3 1672.2 600.9 1654.5 603.5" stroke="#800080"/><path d="M1654.5 601.9 1672.2 596.0 1689.9 589.0 1707.6 582.3 1725.2 575.7 1742.9 569.3 1760.6 562.9 1778.3 556.4 1796.0 550.0 1813.7 543.6 1831.4 537.1 1849.1 530.2 1866.8 522.9 1884.4 515.5 1902.1 507.8 1919.8 500.1 1937.5 492.3 1955.2 484.6 1972.9 477.0 1990.6 469.7 2008.2 462.8 2025.9 456.1 2043.6 449.3 2061.3 442.1 2079.0 434.1 2096.7 426.0 2114.4 417.3 2132.1 408.3 2149.8 399.5 2167.4 391.3 2185.1 383.8 2202.8 376.8 2220.5 370.1 2238.2 363.5 2255.9 356.9 2273.6 350.1 2291.2 343.1 2308.9 334.3 2326.6 325.3 2344.3 320.7 2362.0 317.0 2362.0 317.2 2344.3 322.5 2326.6 327.8 2308.9 337.1 2291.2 344.2 2273.6 351.9 2255.9 359.7 2238.2 367.5 2220.5 375.3 2202.8 383.1 2185.1 390.9 2167.4 398.7 2149.8 406.3 2132.1 413.6 2114.4 420.7 2096.7 427.6 2079.0 434.7 2061.3 442.3 2043.6 449.8 2025.9 457.5 2008.2 465.4 1990.6 473.6 1972.9 481.8 1955.2 490.0 1937.5 497.9 1919.8 505.6 1902.1 513.1 1884.4 520.6 1866.8 528.3 1849.1 536.3 1831.4 544.2 1813.7 551.9 1796.0 559.3 1778.3 566.6 1760.6 573.4 1742.9 579.4 1725.2 584.6 1707.6 589.5 1689.9 594.1 1672.2 598.3 1654.5 602.2" stroke="#ffa500"/><path d="M1654.5 600.7 1672.2 592.7 1689.9 584.1 1707.6 577.1 1725.2 570.3 1742.9 563.8 1760.6 557.4 1778.3 550.9 1796.0 544.3 1813.7 537.6 1831.4 530.5 1849.1 523.0 1866.8 514.9 1884.4 506.5 1902.1 498.0 1919.8 489.6 1937.5 481.2 1955.2 473.0 1972.9 465.2 1990.6 457.9 2008.2 451.7 2025.9 446.3 2043.6 440.9 2061.3 435.1 2079.0 428.7 2096.7 420.7 2114.4 410.8 2132.1 400.3 2149.8 390.5 2167.4 382.0 2185.1 374.8 2202.8 368.0 2220.5 361.5 2238.2 354.9 2255.9 347.9 2273.6 340.7 2291.2 333.1 2308.9 324.6 2326.6 316.0 2344.3 312.5 2362.0 314.5 2362.0 319.1 2344.3 329.5 2326.6 336.0 2308.9 346.1 2291.2 353.6 2273.6 362.4 2255.9 371.1 2238.2 379.5 2220.5 387.3 2202.8 394.6 2185.1 401.3 2167.4 407.8 2149.8 413.4 2132.1 418.3 2114.4 422.9 2096.7 428.5 2079.0 435.5 2061.3 443.4 2043.6 451.9 2025.9 460.5 2008.2 469.3 1990.6 477.7 1972.9 485.9 1955.2 494.1 1937.5 502.2 1919.8 510.2 1902.1 518.2 1884.4 526.0 1866.8 533.5 1849.1 541.0 1831.4 548.0 1813.7 554.6 1796.0 561.0 1778.3 567.7 1760.6 574.5 1742.9 580.9 1725.2 587.0 1707.6 593.0 1689.9 598.6 1672.2 602.4 1654.5 604.0" stroke="#008080"/><path d="M1654.5 600.8 1672.2 593.7 1689.9 587.0 1707.6 581.3 1725.2 575.6 1742.9 569.8 1760.6 563.5 1778.3 556.6 1796.0 549.2 1813.7 541.7 1831.4 534.0 1849.1 526.1 1866.8 518.1 1884.4 510.2 1902.1 502.4 1919.8 494.7 1937.5 486.8 1955.2 478.6 1972.9 470.4 1990.6 462.3 2008.2 454.8 2025.9 448.0 2043.6 441.4 2061.3 435.0 2079.0 428.8 2096.7 421.6 2114.4 413.2 2132.1 404.6 2149.8 396.1 2167.4 388.1 2185.1 380.3 2202.8 372.5 2220.5 364.5 2238.2 356.5 2255.9 348.6 2273.6 340.8 2291.2 333.3 2308.9 327.8 2326.6 319.3 2344.3 315.5 2362.0 315.4 2362.0 318.1 2344.3 325.9 2326.6 331.6 2308.9 341.3 2291.2 347.3 2273.6 355.4 2255.9 363.6 2238.2 371.7 2220.5 379.7 2202.8 387.3 2185.1 394.5 2167.4 401.5 2149.8 407.8 2132.1 413.6 2114.4 419.3 2096.7 425.8 2079.0 433.1 2061.3 440.8 2043.6 449.2 2025.9 457.8 2008.2 466.4 1990.6 474.8 1972.9 482.8 1955.2 490.8 1937.5 498.6 1919.8 506.4 1902.1 514.5 1884.4 522.6 1866.8 530.9 1849.1 539.3 1831.4 547.3 1813.7 554.6 1796.0 561.3 1778.3 567.7 1760.6 573.4 1742.9 578.4 1725.2 582.8 1707.6 587.2 1689.9 591.8 1672.2 596.0 1654.5 601.6" stroke="#0000ff"/><path d="M1654.5 600.8 1672.2 594.0 1689.9 588.0 1707.6 582.6 1725.2 577.1 1742.9 571.4 1760.6 565.2 1778.3 558.5 1796.0 551.4 1813.7 544.3 1831.4 537.2 1849.1 529.8 1866.8 522.3 1884.4 514.7 1902.1 507.0 1919.8 499.2 1937.5 491.1 1955.2 482.8 1972.9 474.4 1990.6 466.3 2008.2 458.7 2025.9 451.7 2043.6 445.0 2061.3 438.5 2079.0 431.9 2096.7 424.8 2114.4 417.1 2132.1 409.1 2149.8 401.2 2167.4 393.7 2185.1 386.4 2202.8 379.1 2220.5 371.7 2238.2 364.1 2255.9 356.2 2273.6 348.0 2291.2 339.8 2308.9 331.9 2326.6 322.8 2344.3 318.4 2362.0 316.1 2362.0 317.8 2344.3 323.8 2326.6 328.7 2308.9 337.9 2291.2 343.5 2273.6 351.6 2255.9 360.0 2238.2 368.6 2220.5 376.9 2202.8 384.9 2185.1 392.4 2167.4 399.5 2149.8 406.4 2132.1 413.2 2114.4 420.0 2096.7 427.0 2079.0 434.5 2061.3 442.4 2043.6 450.1 2025.9 457.5 2008.2 464.8 1990.6 472.0 1972.9 479.3 1955.2 486.9 1937.5 494.8 1919.8 503.1 1902.1 511.6 1884.4 520.1 1866.8 528.4 1849.1 536.4 1831.4 543.7 1813.7 550.4 1796.0 556.6 1778.3 562.9 1760.6 569.3 1742.9 575.5 1725.2 581.6 1707.6 587.7 1689.9 593.6 1672.2 598.6 1654.5 602.5" stroke="#ff0000"/><path d="M1654.5 600.7 1672.2 593.2 1689.9 585.8 1707.6 579.8 1725.2 573.9 1742.9 568.0 1760.6 561.9 1778.3 555.2 1796.0 548.3 1813.7 541.2 1831.4 533.9 1849.1 526.4 1866.8 518.8 1884.4 511.1 1902.1 503.4 1919.8 495.6 1937.5 487.7 1955.2 479.5 1972.9 471.3 1990.6 463.4 2008.2 456.1 2025.9 449.6 2043.6 443.2 2061.3 436.8 2079.0 430.0 2096.7 422.3 2114.4 413.1 2132.1 403.4 2149.8 394.2 2167.4 386.0 2185.1 378.6 2202.8 371.4 2220.5 364.3 2238.2 357.1 2255.9 349.8 2273.6 342.1 2291.2 334.3 2308.9 326.6 2326.6 317.8 2344.3 314.0 2362.0 314.8 2362.0 319.0 2344.3 328.5 2326.6 334.6 2308.9 344.4 2291.2 351.9 2273.6 359.2 2255.9 366.4 2238.2 373.6 2220.5 380.9 2202.8 388.4 2185.1 396.1 2167.4 404.0 2149.8 411.4 2132.1 418.0 2114.4 424.2 2096.7 430.2 2079.0 437.3 2061.3 445.2 2043.6 452.8 2025.9 460.6 2008.2 468.4 1990.6 476.2 1972.9 483.9 1955.2 491.8 1937.5 499.8 1919.8 508.0 1902.1 516.4 1884.4 524.7 1866.8 533.1 1849.1 541.3 1831.4 548.9 1813.7 555.8 1796.0 562.0 1778.3 568.0 1760.6 573.6 1742.9 578.8 1725.2 583.8 1707.6 589.0 1689.9 594.5 1672.2 599.3 1654.5 603.1" stroke="#008000"/><path d="M1654.5 601.1 1672.2 595.1 1689.9 589.5 1707.6 584.5 1725.2 579.3 1742.9 573.8 1760.6 567.7 1778.3 560.8 1796.0 553.4 1813.7 545.7 1831.4 537.7 1849.1 529.5 1866.8 521.0 1884.4 512.7 1902.1 504.6 1919.8 496.6 1937.5 488.7 1955.2 480.8 1972.9 473.0 1990.6 465.4 2008.2 458.2 2025.9 451.5 2043.6 444.9 2061.3 438.2 2079.0 431.4 2096.7 424.1 2114.4 416.4 2132.1 408.4 2149.8 400.9 2167.4 393.8 2185.1 387.0 2202.8 379.9 2220.5 372.4 2238.2 364.5 2255.9 356.1 2273.6 347.3 2291.2 338.6 2308.9 330.5 2326.6 321.5 2344.3 317.2 2362.0 315.8 2362.0 317.9 2344.3 324.9 2326.6 330.6 2308.9 340.3 2291.2 348.7 2273.6 356.9 2255.9 364.8 2238.2 372.4 2220.5 379.7 2202.8 386.8 2185.1 394.0 2167.4 401.3 2149.8 408.4 2132.1 415.3 2114.4 421.9 2096.7 428.3 2079.0 435.2 2061.3 442.3 2043.6 449.2 2025.9 456.2 2008.2 463.5 1990.6 471.1 1972.9 479.2 1955.2 487.7 1937.5 496.4 1919.8 505.2 1902.1 514.0 1884.4 522.6 1866.8 530.9 1849.1 538.9 1831.4 546.5 1813.7 553.6 1796.0 560.3 1778.3 567.0 1760.6 573.4 1742.9 579.2 1725.2 584.5 1707.6 589.6 1689.9 594.5 1672.2 598.6 1654.5 602.4" stroke="#0000ff"/><path d="M2362.0 319.8 2356.3 325.5 2350.5 329.8 2344.8 331.1 2339.0 332.4 2333.3 333.8 2327.5 337.2 2321.8 340.7 2316.0 344.2 2310.3 347.1 2304.5 349.5 2298.8 352.4 2293.0 355.0 2287.3 357.5 2281.5 360.0 2275.8 362.5 2270.0 365.0 2264.3 367.4 2258.5 369.7 2252.8 371.8 2247.0 373.8 2241.3 375.7 2235.5 377.5 2229.8 379.4 2224.0 381.3 2218.3 383.4 2212.5 385.7 2206.8 388.0 2201.0 390.6 2195.3 393.2 2189.5 396.0 2183.8 398.9 2178.1 401.8 2172.3 404.7 2166.6 407.6 2160.8 410.3 2155.1 412.7 2149.3 415.3 2143.6 417.7 2137.8 419.9 2132.1 422.0" stroke="#800080"/><path d="M2362.0 319.4 2356.3 324.5 2350.7 328.6 2345.0 329.9 2339.4 331.2 2333.7 332.4 2328.0 335.6 2322.4 339.1 2316.7 342.5 2311.1 345.5 2305.4 347.8 2299.7 351.0 2294.1 353.1 2288.4 355.0 2282.8 356.8 2277.1 358.8 2271.4 361.0 2265.8 363.4 2260.1 366.0 2254.5 368.6 2248.8 371.2 2243.1 373.7 2237.5 376.1 2231.8 378.4 2226.2 380.6 2220.5 382.8 2214.8 385.1 2209.2 387.4 2203.5 389.7 2197.9 392.0 2192.2 394.1 2186.5 396.1 2180.9 397.9 2175.2 399.6 2169.6 401.3 2163.9 403.1 2158.2 405.0 2152.6 407.2 2146.9 409.5 2141.3 412.1 2135.6 415.1" stroke="#0000ff"/><path d="M2082.5 438.0 2071.8 442.4 2061.1 446.8 2050.4 451.4 2039.7 456.1 2029.0 461.0 2018.3 465.8 2007.6 470.7 1996.9 475.7 1986.2 480.6 1975.5 485.6 1964.8 490.5 1954.1 495.5 1943.4 500.6 1932.7 505.8 1922.0 511.1 1911.3 516.5 1900.6 521.9 1889.9 525.0 1879.2 530.5 1868.5 535.7 1857.8 540.7 1847.1 545.6 1836.4 550.1 1825.7 554.4 1815.0 558.5 1804.3 562.5 1793.6 566.6 1782.9 570.7 1772.2 574.6 1761.5 578.3 1750.8 581.6 1740.1 584.6 1729.4 587.2 1718.7 589.6 1708.0 592.1 1697.3 594.6 1686.6 597.2 1675.9 599.3 1665.2 601.1 1654.5 603.0" stroke="#ff0000"/><path d="M2075.5 443.6 2064.9 447.8 2054.4 451.9 2043.9 456.0 2033.4 460.0 2022.8 463.9 2012.3 467.9 2001.8 472.1 1991.3 476.6 1980.7 481.4 1970.2 486.5 1959.7 491.8 1949.2 497.3 1938.6 502.8 1928.1 508.2 1917.6 513.4 1907.1 518.3 1896.6 520.0 1886.0 524.7 1875.5 529.3 1865.0 534.0 1854.5 538.8 1843.9 543.6 1833.4 548.2 1822.9 552.6 1812.4 556.7 1801.8 560.5 1791.3 564.0 1780.8 567.4 1770.3 570.6 1759.7 573.7 1749.2 576.8 1738.7 579.8 1728.2 582.8 1717.6 586.0 1707.1 589.1 1696.6 592.3 1686.1 595.3 1675.5 597.7 1665.0 599.9 1654.5 602.3" stroke="#008000"/><path d="M2356 318L2362 316L2372 314L2380.6 312.2" stroke="#800080"/><path d="M2333 322l3-9h10l-4 7 9-7h8l-5 5 10-4 3 3-5 8-8 4" stroke="#ff0000"/><path d="M2330 321l6-9h9l6 2 9-2 6 5 1 5-3 6-8 4" stroke="#008000"/><path d="M2336 323l8-8 10-1 8 3 6-2-5 9" stroke="#0000ff"/><path d="M2325 322l10-8h8" stroke="#ffa500"/><path d="M1654.5 601.8l12-3 9-5 12-4 14-4M1654.5 602.5h16l8 3 9-1 5 2 8-1 5-9" stroke="#ff0000"/><path d="M1654.5 601.2l13-3 9 3 8 4 13 0 9-4 12-5 10-6 14-7 16-8" stroke="#0000ff"/><path d="M1688 596.5l8-3 8 1-2 6-5 3h-8zM1690 603l8 1.5h17l6-10 12-6" stroke="#800080"/><path d="M1654.5 601.5l18-4 12 1 10 3 10-2" stroke="#008000"/><path d="M1700 582l10-7 12-4 12-4" stroke="#ffa500"/></svg>
<div class="t" style="top:293.60px;height:14px;line-height:14px;font-size:9.6px;color:#666;right:1055.70px;">100</div>
<div class="t" style="top:351.10px;height:14px;line-height:14px;font-size:9.6px;color:#666;right:1055.70px;">75</div>
<div class="t" style="top:408.60px;height:14px;line-height:14px;font-size:9.6px;color:#666;right:1055.70px;">50</div>
<div class="t" style="top:466.10px;height:14px;line-height:14px;font-size:9.6px;color:#666;right:1055.70px;">25</div>
<div class="t" style="top:523.60px;height:14px;line-height:14px;font-size:9.6px;color:#666;right:1055.70px;">0</div>
<div class="t" style="top:581.10px;height:14px;line-height:14px;font-size:9.6px;color:#666;right:1055.70px;">-25</div>
<div class="t" style="top:638.60px;height:14px;line-height:14px;font-size:9.6px;color:#666;right:1055.70px;">-50</div>
<div class="t" style="top:646.60px;height:14px;line-height:14px;font-size:9.6px;color:#666;left:1209.50px;width:600px;text-align:center;">-0.13</div>
<div class="t" style="top:646.60px;height:14px;line-height:14px;font-size:9.6px;color:#666;left:1370.10px;width:600px;text-align:center;">-0.08</div>
<div class="t" style="top:646.60px;height:14px;line-height:14px;font-size:9.6px;color:#666;left:1530.70px;width:600px;text-align:center;">-0.03</div>
<div class="t" style="top:646.60px;height:14px;line-height:14px;font-size:9.6px;color:#666;left:1691.30px;width:600px;text-align:center;">0.02</div>
<div class="t" style="top:646.60px;height:14px;line-height:14px;font-size:9.6px;color:#666;left:1851.90px;width:600px;text-align:center;">0.07</div>
<div class="t" style="top:646.60px;height:14px;line-height:14px;font-size:9.6px;color:#666;left:2012.50px;width:600px;text-align:center;">0.12</div>
<div class="t" style="top:646.60px;height:14px;line-height:14px;font-size:9.6px;color:#666;left:2173.10px;width:600px;text-align:center;">0.17</div>
<div class="t" style="top:253.20px;height:16px;line-height:16px;font-size:11px;color:#000;left:1694.50px;width:600px;text-align:center;">磁滞</div>
<div class="t" style="top:664.60px;height:16px;line-height:16px;font-size:11px;color:#000;left:1695.00px;width:600px;text-align:center;">应变数组计算 (%)</div>
<div class="t" style="left:1150.5px;top:457px;width:600px;height:16px;line-height:16px;font-size:11px;text-align:center;transform:rotate(-90deg)">应力数组 (MPa)</div>
<svg width="2560" height="1130" fill="none" stroke="#555" stroke-width="1"><g transform="translate(1428.3 607)"><path d="M-2.6 8.6L-8 1.6Q-8.4 -.2 -6.8 -.8L-4.6 -.1V-5.8Q-4.3 -6.9 -3.1 -6.8Q-1.9 -6.7 -1.8 -5.6V-2.4M-1.8 -6.2Q-1.6 -7.9 .2 -8Q1.2 -7.8 1.2 -6.6V-2.4M1.2 -6.2Q2.6 -7.4 4 -6V-1.6M4 -4.6Q5.8 -5.4 7 -3.6L7.2 2L5.8 5.4L5.3 8.6" stroke-linejoin="round"/><circle cx="-1.2" cy="20.9" r="5.7" stroke-width="1.2"/><path d="M2.8 25.2l4.9 4.6" stroke-width="2"/><path d="M-5 47.4a4.5 4.5 0 1 0 4.5-5.6" stroke="#c9c9c9" stroke-width="2.7"/><path d="M-6 41.8l5.2-3.6v7.4z" fill="#c9c9c9" stroke="none"/><rect x="-8.1" y="61.5" width="13.2" height="13"/><rect x="3.7" y="58.9" width="4.3" height="4.3" fill="#fff" stroke-width="1.9"/><path d="M-5 63.8v7.7h7z" fill="#555" stroke="none"/><path d="M-2.4 69.4l5.4-5.6" stroke-width="1.5" stroke-dasharray="1.6 1"/></g></svg>
<div class="a" style="left:274px;top:690px;width:2279px;height:433px;background:#fff;border-left:1px solid #666;border-top:1px solid #777;border-bottom:1px solid #666;"></div>
<div class="a" style="left:297px;top:690px;width:2255px;height:433px;background:#fff;border:2px solid #000;border-left-width:1.5px;"></div>
<svg width="2560" height="1130" shape-rendering="crispEdges"><path d="M370 720.5H2537" stroke="#c4c4c4" stroke-dasharray="1 1"/><path d="M370 810.5H2537" stroke="#c4c4c4" stroke-dasharray="1 1"/><path d="M370 902.5H2537" stroke="#c4c4c4" stroke-dasharray="1 1"/><path d="M370 992.5H2537" stroke="#c4c4c4" stroke-dasharray="1 1"/><path d="M774.5 721V1082" stroke="#cacaca" stroke-dasharray="1 1"/><path d="M1181.5 721V1082" stroke="#cacaca" stroke-dasharray="1 1"/><path d="M1589.5 721V1082" stroke="#cacaca" stroke-dasharray="1 1"/><path d="M1996.5 721V1082" stroke="#cacaca" stroke-dasharray="1 1"/><path d="M2403.5 721V1082" stroke="#cacaca" stroke-dasharray="1 1"/><rect x="367.5" y="719" width="2" height="364" fill="#5a5a5a"/><rect x="367.5" y="1082" width="2170" height="2" fill="#5a5a5a"/><path d="M774.2 946.1 776.9 946.1 777.5 856.0 778.5 767.3 779.6 767.4 782.3 768.2 785.1 768.5 787.8 758.0 790.5 754.5 793.2 763.0 795.9 762.6 798.6 769.4 801.3 769.7 804.1 752.1 806.8 757.8 809.5 763.0 812.2 759.4 814.9 760.2 817.6 759.1 820.3 760.8 823.1 760.9 825.8 762.9 828.5 762.0 831.2 761.1 833.9 758.6 836.6 762.7 839.4 758.1 842.1 760.3 844.8 759.5 847.5 766.2 850.2 768.7 852.9 763.3 855.6 763.8 858.4 761.7 861.1 757.5 863.8 764.0 866.5 756.8 869.2 734.1 871.9 756.8 874.6 765.7 877.4 765.8 880.1 758.9 882.8 760.8 885.5 763.8 888.2 767.1 890.9 760.1 893.6 764.3 896.4 767.0 899.1 769.2 901.8 766.3 904.5 759.7 907.2 764.5 909.9 767.9 912.6 763.4 915.4 765.3 918.1 764.8 920.8 763.5 923.5 767.8 926.2 763.0 928.9 761.7 931.6 761.5 934.4 763.9 937.1 765.6 939.8 766.7 942.5 763.3 945.2 763.5 947.9 765.2 950.6 765.0 953.4 763.6 956.1 767.7 958.8 766.7 961.5 760.5 964.2 764.8 966.9 767.2 969.7 763.2 972.4 761.8 975.1 767.6 977.8 760.9 980.5 765.6 983.2 762.8 985.9 767.1 988.7 764.8 991.4 768.0 994.1 764.1 996.8 766.1 999.5 770.0 1002.2 760.8 1004.9 762.1 1007.7 767.3 1010.4 765.9 1013.1 762.9 1015.8 766.7 1018.5 765.3 1021.2 769.7 1023.9 765.2 1026.7 760.5 1029.4 762.2 1032.1 765.1 1034.8 763.2 1037.5 764.0 1040.2 766.1 1042.9 763.8 1045.7 766.4 1048.4 766.9 1051.1 767.6 1053.8 763.4 1056.5 762.6 1059.2 762.5 1061.9 763.4 1064.7 763.2 1067.4 766.6 1070.1 756.8 1072.8 772.7 1075.5 771.8 1078.2 774.7 1080.9 771.9 1083.7 773.4 1086.4 779.4 1089.1 781.8 1091.8 781.4 1094.5 780.2 1097.2 779.0 1100.0 780.3 1102.7 781.8 1105.4 778.9 1108.1 777.2 1110.8 780.6 1113.5 779.9 1116.2 775.6 1119.0 777.9 1121.7 781.3 1124.4 774.1 1127.1 778.3 1129.8 778.8 1132.5 779.6 1135.2 783.1 1138.0 774.4 1140.7 779.5 1143.4 778.2 1146.1 780.3 1148.8 782.7 1151.5 782.8 1154.2 781.5 1157.0 778.8 1159.7 779.7 1162.4 775.8 1165.1 777.3 1167.8 780.5 1170.5 781.3 1173.2 779.7 1176.0 782.7 1178.7 783.2 1181.4 771.8 1184.1 774.8 1186.8 782.0 1189.5 784.4 1192.2 780.4 1195.0 779.7 1197.7 781.7 1200.4 776.2 1203.1 779.9 1205.8 780.4 1208.5 779.0 1211.3 783.2 1214.0 785.7 1216.7 783.7 1219.4 779.1 1222.1 784.7 1224.8 783.0 1227.5 778.7 1230.3 780.1 1233.0 782.4 1235.7 774.3 1238.4 777.0 1241.1 775.0 1243.8 779.3 1246.5 780.1 1249.3 779.5 1252.0 779.3 1254.7 786.0 1257.4 781.4 1260.1 780.7 1262.8 778.8 1265.5 781.2 1268.3 785.1 1271.0 780.8 1273.7 783.2 1276.4 779.9 1279.1 778.7 1281.8 787.7 1284.5 784.1 1287.3 784.3 1290.0 784.9 1292.7 778.9 1295.4 779.2 1298.1 779.8 1300.8 782.3 1303.5 781.9 1306.3 784.5 1309.0 783.4 1311.7 788.2 1314.4 775.2 1317.1 781.2 1319.8 783.0 1322.5 787.4 1325.3 785.0 1328.0 780.6 1330.7 782.1 1333.4 777.1 1336.1 781.2 1338.8 787.4 1341.6 781.8 1344.3 782.4 1347.0 785.5 1349.7 785.4 1352.4 787.9 1355.1 784.6 1357.8 782.9 1360.6 784.7 1363.3 773.6 1366.0 779.6 1368.7 782.3 1371.4 784.4 1374.1 780.2 1376.8 781.7 1379.6 784.4 1382.3 783.1 1385.0 783.2 1387.7 781.5 1390.4 782.6 1393.1 783.9 1395.8 778.8 1398.6 779.8 1401.3 782.3 1404.0 782.3 1406.7 781.4 1409.4 781.7 1412.1 784.1 1414.8 785.6 1417.6 788.3 1420.3 788.5 1423.0 780.5 1425.7 787.9 1428.4 785.7 1431.1 786.7 1433.8 784.6 1436.6 783.6 1439.3 787.3 1442.0 789.2 1444.7 787.0 1447.4 787.8 1450.1 788.8 1452.8 787.0 1455.6 789.6 1458.3 787.9 1461.0 785.1 1463.7 793.1 1466.4 794.1 1469.1 787.5 1471.9 786.4 1474.6 783.9 1477.3 781.6 1480.0 784.6 1482.7 779.1 1485.4 785.9 1488.1 790.4 1490.9 783.8 1493.6 785.2 1496.3 783.1 1499.0 785.4 1501.7 788.5 1504.4 789.3 1507.1 785.4 1509.9 789.3 1512.6 787.6 1515.3 785.9 1518.0 781.9 1520.7 786.0 1523.4 787.1 1526.1 786.6 1528.9 791.2 1531.6 787.4 1534.3 788.1 1537.0 791.8 1539.7 791.4 1542.4 785.6 1545.1 787.2 1547.9 777.7 1550.6 768.6 1553.3 777.7 1556.0 787.4 1558.7 790.0 1561.4 788.0 1564.1 793.9 1566.9 791.3 1569.6 789.5 1572.3 792.9 1575.0 788.6 1577.7 789.0 1580.4 792.7 1583.2 789.9 1585.9 791.3 1588.6 787.1 1591.3 786.2 1594.0 785.6 1596.7 786.6 1599.4 786.7 1602.2 786.8 1604.9 789.3 1607.6 778.3 1610.3 789.1 1613.0 793.9 1615.7 789.2 1618.4 789.8 1621.2 786.7 1623.9 791.2 1626.6 790.2 1629.3 789.4 1632.0 791.2 1634.7 789.8 1637.4 790.6 1640.2 789.8 1642.9 790.3 1645.6 787.2 1648.3 788.3 1651.0 785.6 1653.7 788.4 1656.4 788.6 1659.2 791.9 1661.9 791.3 1664.6 790.2 1667.3 793.5 1670.0 792.8 1672.7 786.0 1675.4 788.0 1678.2 789.8 1680.9 789.3 1683.6 791.9 1686.3 792.7 1689.0 793.9 1691.7 792.7 1694.4 788.6 1697.2 790.0 1699.9 788.7 1702.6 792.0 1705.3 788.4 1708.0 790.1 1710.7 794.6 1713.5 786.2 1716.2 790.5 1718.9 789.4 1721.6 788.9 1724.3 789.1 1727.0 791.1 1729.7 792.7 1732.5 796.6 1735.2 792.8 1737.9 794.3 1740.6 789.7 1743.3 793.5 1746.0 793.1 1748.7 793.4 1751.5 792.3 1754.2 789.7 1756.9 789.0 1759.6 792.8 1762.3 793.3 1765.0 795.7 1767.7 796.1 1770.5 792.9 1773.2 793.7 1775.9 800.0 1778.6 794.4 1781.3 788.3 1784.0 790.1 1786.7 790.5 1789.5 794.1 1792.2 792.6 1794.9 797.7 1797.6 795.0 1800.3 792.8 1803.0 794.2 1805.7 795.4 1808.5 794.3 1811.2 792.6 1813.9 792.0 1816.6 791.7 1819.3 792.0 1822.0 794.5 1824.8 790.0 1827.5 792.1 1830.2 792.5 1832.9 794.2 1835.6 793.8 1838.3 793.2 1841.0 791.7 1843.8 791.2 1846.5 793.9 1849.2 797.1 1851.9 798.0 1854.6 795.0 1857.3 794.9 1860.0 795.4 1862.8 796.5 1865.5 797.4 1868.2 795.2 1870.9 790.5 1873.6 794.5 1876.3 795.9 1879.0 793.9 1881.8 797.5 1884.5 800.7 1887.2 801.0 1889.9 796.9 1892.6 797.4 1895.3 796.5 1898.0 799.5 1900.8 806.2 1903.5 802.1 1906.2 794.9 1908.9 793.2 1911.6 794.7 1914.3 793.1 1917.0 800.1 1919.8 798.9 1922.5 797.2 1925.2 792.7 1927.9 794.0 1930.6 793.3 1933.3 793.8 1936.0 798.3 1938.8 795.2 1941.5 794.9 1944.2 798.2 1946.9 800.1 1949.6 799.4 1952.3 795.7 1955.1 791.7 1957.8 794.8 1960.5 799.2 1963.2 803.2 1965.9 800.2 1968.6 798.7 1971.3 794.1 1974.1 796.3 1976.8 801.6 1979.5 800.4 1982.2 797.9 1984.9 794.7 1987.6 792.5 1990.3 801.5 1993.1 795.8 1995.8 798.6 1998.5 800.0 2001.2 794.5 2003.9 798.2 2006.6 800.6 2009.3 799.0 2012.1 798.7 2014.8 800.9 2017.5 800.2 2020.2 791.6 2022.9 795.2 2025.6 793.9 2028.3 794.1 2031.1 801.4 2033.8 800.7 2036.5 802.2 2039.2 797.5 2041.9 802.7 2044.6 801.2 2047.3 800.5 2050.1 798.9 2052.8 801.4 2055.5 799.0 2058.2 801.0 2060.9 795.0 2063.6 801.5 2066.3 802.0 2069.1 802.9 2071.8 795.5 2074.5 797.2 2077.2 802.0 2079.9 796.1 2082.6 802.1 2085.4 801.7 2088.1 801.4 2090.8 799.8 2093.5 798.9 2096.2 800.1 2098.9 799.2 2101.6 798.9 2104.4 795.5 2107.1 800.6 2109.8 800.5 2112.5 804.5 2115.2 799.6 2117.9 802.1 2120.6 801.5" fill="none" stroke="#ff0000" stroke-width="1"/><path d="M774.2 946.1 777.7 946.1 777.7 992.5 778.8 1004.8 779.6 999.5 782.3 1000.5 785.1 1002.9 787.8 999.8 790.5 1001.2 793.2 1000.5 795.9 999.1 798.6 998.1 801.3 999.1 804.1 1000.5 806.8 999.1 809.5 1001.6 812.2 1002.0 814.9 1002.4 817.6 1000.3 820.3 998.9 823.1 998.6 825.8 1000.5 828.5 995.6 831.2 996.4 833.9 1001.5 836.6 997.3 839.4 995.3 842.1 999.3 844.8 998.2 847.5 997.7 850.2 1000.7 852.9 1002.5 855.6 1008.0 858.4 1006.4 861.1 998.5 863.8 995.9 866.5 995.2 869.2 999.0 871.9 1000.3 874.6 1000.2 877.4 1001.3 880.1 1001.1 882.8 999.9 885.5 1008.3 888.2 1000.0 890.9 998.8 893.6 1005.5 896.4 996.7 899.1 997.8 901.8 1002.8 904.5 998.4 907.2 1003.8 909.9 998.4 912.6 998.9 915.4 1004.2 918.1 1000.2 920.8 998.8 923.5 998.3 926.2 997.5 928.9 992.5 931.6 997.9 934.4 992.5 937.1 1001.9 939.8 1003.4 942.5 1002.4 945.2 1001.4 947.9 998.0 950.6 999.1 953.4 999.4 956.1 1004.2 958.8 1003.8 961.5 1002.3 964.2 997.9 966.9 1004.3 969.7 1001.6 972.4 998.3 975.1 997.9 977.8 1000.0 980.5 1006.6 983.2 994.2 985.9 1002.2 988.7 1003.0 991.4 1003.0 994.1 1002.7 996.8 999.0 999.5 1001.4 1002.2 1001.9 1004.9 997.1 1007.7 1003.9 1010.4 998.0 1013.1 994.9 1015.8 1001.9 1018.5 1001.4 1021.2 999.2 1023.9 1000.7 1026.7 1002.0 1029.4 998.6 1032.1 1000.6 1034.8 1001.2 1037.5 999.8 1040.2 997.5 1042.9 997.5 1045.7 999.5 1048.4 1001.4 1051.1 1004.0 1053.8 1002.9 1056.5 1002.7 1059.2 995.2 1061.9 994.8 1064.7 999.4 1067.4 998.5 1070.1 1003.5 1072.8 1001.3 1075.5 1000.5 1078.2 1001.5 1080.9 999.2 1083.7 1001.8 1086.4 1026.2 1089.1 1016.2 1091.8 1019.8 1094.5 1020.2 1097.2 1016.4 1100.0 1020.0 1102.7 1018.6 1105.4 1009.5 1108.1 1019.5 1110.8 1021.3 1113.5 1019.9 1116.2 1016.4 1119.0 1012.0 1121.7 1016.2 1124.4 1016.8 1127.1 1016.9 1129.8 1014.9 1132.5 1015.8 1135.2 1018.1 1138.0 1017.7 1140.7 1020.1 1143.4 1016.9 1146.1 1017.4 1148.8 1017.7 1151.5 1020.5 1154.2 1018.7 1157.0 1012.8 1159.7 1018.3 1162.4 1016.0 1165.1 1017.8 1167.8 1020.9 1170.5 1019.9 1173.2 1018.3 1176.0 1017.0 1178.7 1019.2 1181.4 1018.6 1184.1 1013.2 1186.8 1015.7 1189.5 1018.1 1192.2 1008.9 1195.0 1012.7 1197.7 1015.7 1200.4 1015.4 1203.1 1015.0 1205.8 1020.0 1208.5 1021.6 1211.3 1019.4 1214.0 1026.0 1216.7 1026.8 1219.4 1020.7 1222.1 1020.5 1224.8 1019.5 1227.5 1017.0 1230.3 1016.6 1233.0 1017.2 1235.7 1020.0 1238.4 1020.9 1241.1 1021.4 1243.8 1018.8 1246.5 1014.7 1249.3 1022.1 1252.0 1020.4 1254.7 1019.8 1257.4 1019.8 1260.1 1018.1 1262.8 1016.5 1265.5 1020.8 1268.3 1020.4 1271.0 1019.9 1273.7 1022.4 1276.4 1023.2 1279.1 1024.8 1281.8 1022.7 1284.5 1018.3 1287.3 1017.9 1290.0 1013.6 1292.7 1014.4 1295.4 1018.0 1298.1 1018.4 1300.8 1015.8 1303.5 1017.0 1306.3 1015.9 1309.0 1013.6 1311.7 1017.7 1314.4 1017.1 1317.1 1020.3 1319.8 1021.2 1322.5 1015.6 1325.3 1016.6 1328.0 1022.6 1330.7 1015.9 1333.4 1019.8 1336.1 1019.1 1338.8 1019.5 1341.6 1021.0 1344.3 1021.0 1347.0 1021.1 1349.7 1019.2 1352.4 1019.1 1355.1 1018.2 1357.8 1021.6 1360.6 1022.4 1363.3 1021.1 1366.0 1022.1 1368.7 1017.6 1371.4 1017.6 1374.1 1019.8 1376.8 1020.9 1379.6 1023.4 1382.3 1024.4 1385.0 1021.9 1387.7 1022.3 1390.4 1025.1 1393.1 1020.5 1395.8 1021.4 1398.6 1020.5 1401.3 1019.0 1404.0 1024.8 1406.7 1023.3 1409.4 1017.1 1412.1 1026.9 1414.8 1025.2 1417.6 1023.4 1420.3 1018.4 1423.0 1016.0 1425.7 1022.2 1428.4 1025.2 1431.1 1014.7 1433.8 1018.8 1436.6 1021.0 1439.3 1023.7 1442.0 1021.0 1444.7 1019.2 1447.4 1020.8 1450.1 1021.9 1452.8 1023.2 1455.6 1021.1 1458.3 1027.0 1461.0 1027.9 1463.7 1024.6 1466.4 1021.7 1469.1 1028.6 1471.9 1027.3 1474.6 1023.4 1477.3 1021.9 1480.0 1020.2 1482.7 1026.5 1485.4 1019.4 1488.1 1025.0 1490.9 1022.1 1493.6 1020.6 1496.3 1023.5 1499.0 1022.8 1501.7 1018.9 1504.4 1022.0 1507.1 1023.0 1509.9 1022.2 1512.6 1018.2 1515.3 1019.9 1518.0 1023.4 1520.7 1027.3 1523.4 1023.7 1526.1 1020.6 1528.9 1019.4 1531.6 1020.2 1534.3 1018.4 1537.0 1019.6 1539.7 1024.5 1542.4 1023.0 1545.1 1019.1 1547.9 1023.1 1550.6 1020.2 1553.3 1024.7 1556.0 1026.9 1558.7 1027.4 1561.4 1026.7 1564.1 1021.3 1566.9 1019.7 1569.6 1023.4 1572.3 1025.1 1575.0 1024.2 1577.7 1017.8 1580.4 1021.4 1583.2 1021.1 1585.9 1026.3 1588.6 1023.3 1591.3 1019.6 1594.0 1020.8 1596.7 1024.0 1599.4 1024.0 1602.2 1023.6 1604.9 1022.8 1607.6 1021.7 1610.3 1021.3 1613.0 1021.5 1615.7 1023.0 1618.4 1025.0 1621.2 1026.6 1623.9 1020.4 1626.6 1021.4 1629.3 1021.6 1632.0 1021.1 1634.7 1023.6 1637.4 1025.7 1640.2 1022.2 1642.9 1024.7 1645.6 1025.7 1648.3 1025.4 1651.0 1021.3 1653.7 1022.9 1656.4 1023.5 1659.2 1022.2 1661.9 1027.1 1664.6 1023.1 1667.3 1022.8 1670.0 1022.1 1672.7 1024.2 1675.4 1025.4 1678.2 1020.2 1680.9 1023.5 1683.6 1023.4 1686.3 1022.2 1689.0 1023.1 1691.7 1023.2 1694.4 1021.8 1697.2 1023.8 1699.9 1023.8 1702.6 1025.6 1705.3 1025.0 1708.0 1022.4 1710.7 1030.7 1713.5 1027.5 1716.2 1023.8 1718.9 1025.9 1721.6 1024.1 1724.3 1025.0 1727.0 1027.8 1729.7 1024.3 1732.5 1027.1 1735.2 1026.4 1737.9 1021.2 1740.6 1027.3 1743.3 1026.6 1746.0 1028.7 1748.7 1026.5 1751.5 1025.6 1754.2 1024.5 1756.9 1022.0 1759.6 1021.7 1762.3 1025.2 1765.0 1021.7 1767.7 1027.7 1770.5 1030.1 1773.2 1029.7 1775.9 1030.6 1778.6 1030.6 1781.3 1030.4 1784.0 1026.0 1786.7 1026.3 1789.5 1027.1 1792.2 1030.4 1794.9 1031.0 1797.6 1031.4 1800.3 1028.5 1803.0 1027.7 1805.7 1027.8 1808.5 1025.3 1811.2 1025.9 1813.9 1026.1 1816.6 1022.9 1819.3 1030.1 1822.0 1030.9 1824.8 1034.9 1827.5 1032.6 1830.2 1026.4 1832.9 1024.7 1835.6 1027.5 1838.3 1032.4 1841.0 1033.1 1843.8 1031.2 1846.5 1029.8 1849.2 1025.6 1851.9 1024.5 1854.6 1026.9 1857.3 1029.9 1860.0 1030.0 1862.8 1025.0 1865.5 1026.2 1868.2 1021.5 1870.9 1021.9 1873.6 1022.7 1876.3 1022.3 1879.0 1023.2 1881.8 1026.8 1884.5 1032.5 1887.2 1028.3 1889.9 1030.2 1892.6 1026.7 1895.3 1027.5 1898.0 1029.3 1900.8 1027.7 1903.5 1037.9 1906.2 1029.5 1908.9 1032.3 1911.6 1032.8 1914.3 1032.2 1917.0 1029.9 1919.8 1024.1 1922.5 1032.3 1925.2 1033.0 1927.9 1032.2 1930.6 1028.1 1933.3 1027.5 1936.0 1033.5 1938.8 1024.6 1941.5 1023.9 1944.2 1024.8 1946.9 1028.5 1949.6 1030.8 1952.3 1031.0 1955.1 1030.3 1957.8 1026.1 1960.5 1025.9 1963.2 1029.6 1965.9 1025.1 1968.6 1023.4 1971.3 1030.7 1974.1 1029.9 1976.8 1026.6 1979.5 1029.2 1982.2 1030.3 1984.9 1035.2 1987.6 1030.3 1990.3 1027.9 1993.1 1034.4 1995.8 1032.0 1998.5 1033.6 2001.2 1030.0 2003.9 1036.3 2006.6 1027.2 2009.3 1026.7 2012.1 1031.3 2014.8 1033.7 2017.5 1035.4 2020.2 1029.5 2022.9 1029.7 2025.6 1026.6 2028.3 1026.5 2031.1 1028.3 2033.8 1028.9 2036.5 1030.3 2039.2 1031.9 2041.9 1028.0 2044.6 1030.2 2047.3 1035.5 2050.1 1030.3 2052.8 1033.3 2055.5 1029.5 2058.2 1027.4 2060.9 1032.1 2063.6 1030.5 2066.3 1029.2 2069.1 1029.4 2071.8 1029.2 2074.5 1029.1 2077.2 1029.8 2079.9 1030.3 2082.6 1035.5 2085.4 1029.1 2088.1 1027.7 2090.8 1029.0 2093.5 1031.9 2096.2 1026.6 2098.9 1033.8 2101.6 1035.8 2104.4 1030.0 2107.1 1031.9 2109.8 1031.8 2112.5 1036.7 2115.2 1036.4 2117.9 1033.6 2120.6 1032.8" fill="none" stroke="#0000ff" stroke-width="1"/></svg>
<div class="t" style="top:711.90px;height:14px;line-height:14px;font-size:9.6px;color:#666;right:2198.20px;">0.05</div>
<div class="t" style="top:802.90px;height:14px;line-height:14px;font-size:9.6px;color:#666;right:2198.20px;">0.03</div>
<div class="t" style="top:893.90px;height:14px;line-height:14px;font-size:9.6px;color:#666;right:2198.20px;">0.01</div>
<div class="t" style="top:984.90px;height:14px;line-height:14px;font-size:9.6px;color:#666;right:2198.20px;">-0.01</div>
<div class="t" style="top:1075.90px;height:14px;line-height:14px;font-size:9.6px;color:#666;right:2198.20px;">-0.03</div>
<div class="t" style="top:1083.80px;height:14px;line-height:14px;font-size:9.6px;color:#666;left:66.41px;width:600px;text-align:center;">-300</div>
<div class="t" style="top:1083.80px;height:14px;line-height:14px;font-size:9.6px;color:#666;left:473.60px;width:600px;text-align:center;">0</div>
<div class="t" style="top:1083.80px;height:14px;line-height:14px;font-size:9.6px;color:#666;left:880.79px;width:600px;text-align:center;">300</div>
<div class="t" style="top:1083.80px;height:14px;line-height:14px;font-size:9.6px;color:#666;left:1287.98px;width:600px;text-align:center;">600</div>
<div class="t" style="top:1083.80px;height:14px;line-height:14px;font-size:9.6px;color:#666;left:1695.17px;width:600px;text-align:center;">900</div>
<div class="t" style="top:1083.80px;height:14px;line-height:14px;font-size:9.6px;color:#666;left:2102.36px;width:600px;text-align:center;">1200</div>
<div class="t" style="top:693.20px;height:16px;line-height:16px;font-size:11px;color:#000;left:1123.30px;width:600px;text-align:center;">位移-循环周次</div>
<div class="t" style="top:1100.80px;height:16px;line-height:16px;font-size:11px;color:#000;left:1123.30px;width:600px;text-align:center;">循环</div>
<div class="t" style="left:8.2px;top:896.8px;width:600px;height:16px;line-height:16px;font-size:11px;text-align:center;transform:rotate(-90deg)">mm</div>
<svg width="2560" height="1130" fill="none" stroke="#555" stroke-width="1"><g transform="translate(286.5 1044.4)"><path d="M-2.6 8.6L-8 1.6Q-8.4 -.2 -6.8 -.8L-4.6 -.1V-5.8Q-4.3 -6.9 -3.1 -6.8Q-1.9 -6.7 -1.8 -5.6V-2.4M-1.8 -6.2Q-1.6 -7.9 .2 -8Q1.2 -7.8 1.2 -6.6V-2.4M1.2 -6.2Q2.6 -7.4 4 -6V-1.6M4 -4.6Q5.8 -5.4 7 -3.6L7.2 2L5.8 5.4L5.3 8.6" stroke-linejoin="round"/><circle cx="-1.2" cy="20.9" r="5.7" stroke-width="1.2"/><path d="M2.8 25.2l4.9 4.6" stroke-width="2"/><path d="M-5 47.4a4.5 4.5 0 1 0 4.5-5.6" stroke="#c9c9c9" stroke-width="2.7"/><path d="M-6 41.8l5.2-3.6v7.4z" fill="#c9c9c9" stroke="none"/><rect x="-8.1" y="61.5" width="13.2" height="13"/><rect x="3.7" y="58.9" width="4.3" height="4.3" fill="#fff" stroke-width="1.9"/><path d="M-5 63.8v7.7h7z" fill="#555" stroke="none"/><path d="M-2.4 69.4l5.4-5.6" stroke-width="1.5" stroke-dasharray="1.6 1"/></g></svg>
<div class="a" style="left:0px;top:1131px;width:2560px;height:7px;background:linear-gradient(#efefef,#e2e2e2 60%,#d6d6d6);"></div>
<div class="a" style="left:1262px;top:1131px;width:36px;height:6px;background:#bdbdbd;"></div>
<svg width="2560" height="1140"><path d="M1276.5 1132.6h6l-3 3z" fill="#fff"/></svg>
<div class="a" style="left:0px;top:1138px;width:2560px;height:20px;background:#d4d4d4;"></div>
<div class="a" style="left:0px;top:1155px;width:2560px;height:2px;background:#9d9d9d;"></div>
<div class="a" style="left:45px;top:1138px;width:55px;height:17px;background:#d4d4d4;border:1px solid #9a9a9a;border-bottom:none;"></div>
<div class="a" style="left:2px;top:1138px;width:44px;height:18px;background:#ececec;border:1px solid #9a9a9a;border-bottom:none;"></div>
<div class="t" style="top:1138.40px;height:18px;line-height:18px;font-size:12px;color:#000;left:5.70px;">数字表</div>
<div class="t" style="top:1138.90px;height:17px;line-height:17px;font-size:11.4px;color:#000;left:50.30px;">错误列表</div>
<div class="a" style="left:0px;top:1157px;width:2560px;height:254px;background:#a4a4a4;"></div>
<div class="a" style="left:3px;top:1158px;width:1272px;height:249px;background:#000;"></div>
<div class="a" style="left:1275px;top:1158px;width:3px;height:249px;background:#f4f4f4;"></div>
<div class="a" style="left:1278px;top:1158px;width:1271px;height:249px;background:#000;"></div>
<div class="a" style="left:0px;top:1407px;width:2549px;height:4px;background:linear-gradient(#b5b5b5,#8a8a8a);"></div>
<div class="a" style="left:2549px;top:1157px;width:3px;height:254px;background:#fdfdfd;"></div>
<div class="a" style="left:2552px;top:1138px;width:1px;height:273px;background:#a0a0a0;"></div>
<div class="a" style="left:2553px;top:1138px;width:7px;height:273px;background:linear-gradient(90deg,#f0f0f0,#e2e2e2);"></div>
<div class="a" style="left:2552px;top:1256px;width:8px;height:34px;background:#c6c6c6;"></div>
<svg width="2560" height="1411"><path d="M2557.5 1270.5v5l-3-2.5z" fill="#fff"/><g fill="none" stroke="#00ff00" stroke-width="2"><path d="M19.8 1242.6A20.2 43.6 0 0 1 59.2 1242.6"/><path d="M19.8 1261A20.2 43.6 0 0 0 59.2 1261"/></g><rect x="32.4" y="1202.4" width="13.9" height="4.3" fill="#ff0000"/><rect x="31.8" y="1296.9" width="15.2" height="4.2" fill="#ff0000"/></svg>
<div class="t" style="left:567.30px;top:1160.61px;height:44px;line-height:44px;font-size:32px;color:#00fb00;letter-spacing:-0.520px;">Axial Force</div>
<div class="t" style="left:602.00px;top:1207.81px;height:44px;line-height:44px;font-size:32px;color:#00fb00;letter-spacing:-0.643px;">7.894 kN</div>
<div class="t" style="left:590.10px;top:1249.91px;height:44px;line-height:44px;font-size:32px;color:#00fb00;letter-spacing:-0.450px;">-2.713 kN</div>
<div class="t" style="left:1785.00px;top:1160.71px;height:44px;line-height:44px;font-size:32px;color:#00fb00;letter-spacing:-0.153px;">Axial Displacement</div>
<div class="t" style="left:1872.70px;top:1207.91px;height:44px;line-height:44px;font-size:32px;color:#00fb00;letter-spacing:-1.500px;">-0.001</div>
<div class="t" style="left:1888.00px;top:1250.01px;height:44px;line-height:44px;font-size:32px;color:#00fb00;letter-spacing:0.000px;transform:scale(1.075,0.94);transform-origin:2.0px 33.09px;">mm</div>
</body></html>
